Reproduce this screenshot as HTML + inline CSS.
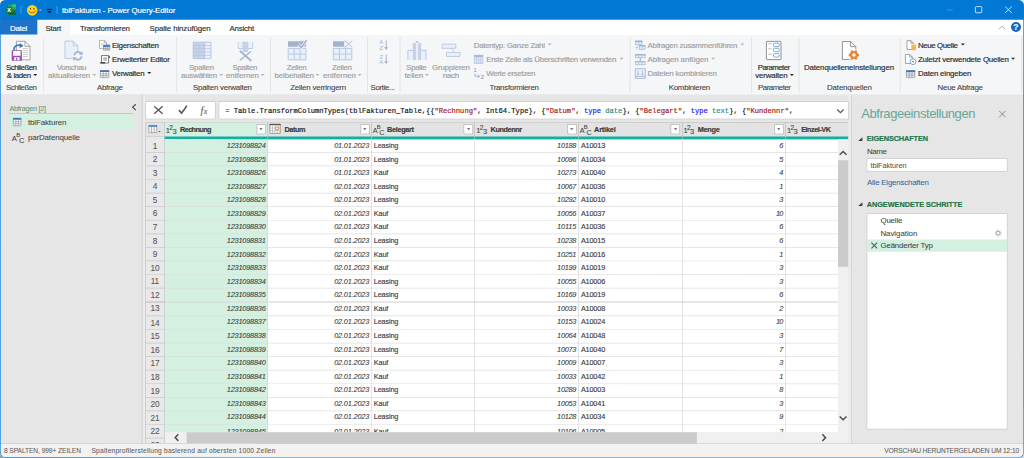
<!DOCTYPE html>
<html lang="de"><head><meta charset="utf-8"><title>tblFakturen - Power Query-Editor</title>
<style>
html,body{margin:0;padding:0;width:1024px;height:458px;overflow:hidden;background:#f4efe9;}
#w{position:absolute;left:0;top:0;width:1509px;height:675px;transform:scale(0.678595) rotate(0.004deg);transform-origin:0 0;font-family:"Liberation Sans",sans-serif;overflow:hidden;background:#e6e6e6;border-radius:8px;}
#w div,#w span.t,#w svg{position:absolute;display:block;box-sizing:border-box;}
#w span.t{white-space:nowrap;-webkit-text-stroke:0.25px;}
#w svg{overflow:visible;}
#cl,#cr{position:absolute;top:448px;width:10px;height:10px;background:#8d9b8c;}#cl{left:0;}#cr{left:1014px;background:#c3d6ea;}
</style></head><body><div id="cl"></div><div id="cr"></div><div id="w">
<div style="left:0.0px;top:27.26px;width:1509.0px;height:26.53px;background:#fff;"></div>
<div style="left:0.0px;top:27.26px;width:56.73px;height:26.53px;background:#1f72c9;"></div>
<div style="left:54.67px;top:27.26px;width:48.92px;height:26.53px;background:#f5f6f7;"></div>
<div style="left:0.0px;top:0.0px;width:1509.0px;height:29.33px;background:#0078d4;"></div>
<span class="t" style="font-size:11.64px;line-height:11.64px;color:#fff;letter-spacing:-0.114px;left:91.37px;top:8.84px;">tblFakturen - Power Query-Editor</span>
<svg style="left:0;top:0;pointer-events:none" width="1509" height="675" viewBox="0 0 1024 458"><rect x="8.20" y="4.40" width="7.80" height="10.30" fill="#21a366" stroke="none" stroke-width="0.7" rx="0.8" /><rect x="12.00" y="4.40" width="4.00" height="2.70" fill="#33c481" stroke="none" stroke-width="0.7" rx="0" /><rect x="8.20" y="9.60" width="7.80" height="2.60" fill="#107c41" stroke="none" stroke-width="0.7" rx="0" /><rect x="8.20" y="12.20" width="7.80" height="2.50" fill="#185c37" stroke="none" stroke-width="0.7" rx="0.6" /><rect x="5.90" y="6.60" width="6.40" height="6.30" fill="#107c41" stroke="none" stroke-width="0.7" rx="0.7" /><text x="9.10" y="11.90" font-size="5.6" fill="#fff" font-weight="bold" font-style="normal" font-family="&quot;Liberation Sans&quot;,sans-serif" text-anchor="middle" stroke="#fff" stroke-width="0.08" >X</text><line x1="21.00" y1="6.00" x2="21.00" y2="13.80" stroke="#5aa5e3" stroke-width="0.8" stroke-linecap="butt"/><circle cx="32.2" cy="10.3" r="5.3" fill="#ffd21f"/><ellipse cx="30.5" cy="8.8" rx="0.7" ry="1" fill="#6b5a1e"/><ellipse cx="34" cy="8.8" rx="0.7" ry="1" fill="#6b5a1e"/><path d="M28.9 11.3Q32.2 14.8 35.5 11.3" fill="none" stroke="#6b5a1e" stroke-width="0.8" stroke-linecap="round"/><path d="M38.9 9.4H41.7L40.3 11.2Z" fill="#c9b6b6" stroke="none" stroke-width="0.7" /><line x1="46.90" y1="9.40" x2="51.90" y2="9.40" stroke="#111" stroke-width="0.9" stroke-linecap="butt"/><path d="M47.1 11H51.7L49.4 13.2Z" fill="#111" stroke="none" stroke-width="0.7" /><line x1="57.00" y1="6.00" x2="57.00" y2="13.80" stroke="#5aa5e3" stroke-width="0.8" stroke-linecap="butt"/><line x1="946.20" y1="9.85" x2="952.70" y2="9.85" stroke="#4a9ee6" stroke-width="0.8" stroke-linecap="butt"/><rect x="975.40" y="6.50" width="6.40" height="6.20" fill="none" stroke="#fff" stroke-width="0.75" rx="0.9" /><line x1="1005.10" y1="6.40" x2="1011.80" y2="12.80" stroke="#fff" stroke-width="0.75" stroke-linecap="butt"/><line x1="1011.80" y1="6.40" x2="1005.10" y2="12.80" stroke="#fff" stroke-width="0.75" stroke-linecap="butt"/></svg>
<span class="t" style="font-size:11.64px;line-height:11.64px;color:#fff;letter-spacing:-0.439px;left:14.74px;top:34.77px;">Datei</span>
<span class="t" style="font-size:11.64px;line-height:11.64px;color:#333;letter-spacing:-0.381px;left:67.2px;top:34.77px;">Start</span>
<span class="t" style="font-size:11.64px;line-height:11.64px;color:#333;letter-spacing:-0.370px;left:117.89px;top:34.77px;">Transformieren</span>
<span class="t" style="font-size:11.64px;line-height:11.64px;color:#333;letter-spacing:-0.184px;left:220.31px;top:34.77px;">Spalte hinzufügen</span>
<span class="t" style="font-size:11.64px;line-height:11.64px;color:#333;letter-spacing:-0.284px;left:338.2px;top:34.77px;">Ansicht</span>
<svg style="left:0;top:0;pointer-events:none" width="1509" height="675" viewBox="0 0 1024 458"><path d="M999 29L1002 26L1005 29" fill="none" stroke="#9a9a9a" stroke-width="0.8" /><circle cx="1016" cy="26.9" r="5" fill="#1565b8"/><text x="1016.00" y="29.90" font-size="8.6" fill="#fff" font-weight="bold" font-style="normal" font-family="&quot;Liberation Sans&quot;,sans-serif" text-anchor="middle" stroke="#fff" stroke-width="0.08" >?</text></svg>
<div style="left:0.0px;top:51.14px;width:1509.0px;height:87.39px;background:#f5f6f7;"></div>
<div style="left:63.59px;top:55.26px;width:1.03px;height:80.31px;background:#dadbdc;"></div>
<div style="left:259.73px;top:55.26px;width:1.03px;height:80.31px;background:#dadbdc;"></div>
<div style="left:397.81px;top:55.26px;width:1.03px;height:80.31px;background:#dadbdc;"></div>
<div style="left:540.9px;top:55.26px;width:1.03px;height:80.31px;background:#dadbdc;"></div>
<div style="left:589.31px;top:55.26px;width:1.03px;height:80.31px;background:#dadbdc;"></div>
<div style="left:928.46px;top:55.26px;width:1.03px;height:80.31px;background:#dadbdc;"></div>
<div style="left:1106.92px;top:55.26px;width:1.03px;height:80.31px;background:#dadbdc;"></div>
<div style="left:1176.55px;top:55.26px;width:1.03px;height:80.31px;background:#dadbdc;"></div>
<div style="left:1326.2px;top:55.26px;width:1.03px;height:80.31px;background:#dadbdc;"></div>
<div style="left:1504.95px;top:55.26px;width:1.03px;height:80.31px;background:#dadbdc;"></div>
<span class="t" style="font-size:11.64px;line-height:11.64px;color:#2b2b2b;letter-spacing:-0.761px;left:31.30px;transform:translateX(-50%);top:92.54px;">Schließen</span>
<span class="t" style="font-size:11.64px;line-height:11.64px;color:#2b2b2b;letter-spacing:-0.563px;left:27.72px;transform:translateX(-50%);top:104.84px;">&amp; laden</span>
<svg style="left:48.7px;top:109.12px;" width="5.89" height="2.95" viewBox="0 0 2 1"><path d="M0 0H2L1 1Z" fill="#222"/></svg>
<span class="t" style="font-size:11.64px;line-height:11.64px;color:#a0a0a0;letter-spacing:-0.724px;left:105.30px;transform:translateX(-50%);top:92.54px;">Vorschau</span>
<span class="t" style="font-size:11.64px;line-height:11.64px;color:#a0a0a0;letter-spacing:-0.264px;left:101.85px;transform:translateX(-50%);top:104.84px;">aktualisieren</span>
<svg style="left:135.72px;top:109.12px;" width="5.89" height="2.95" viewBox="0 0 2 1"><path d="M0 0H2L1 1Z" fill="#b4b4b4"/></svg>
<span class="t" style="font-size:11.64px;line-height:11.64px;color:#a0a0a0;letter-spacing:-0.441px;left:296.86px;transform:translateX(-50%);top:92.54px;">Spalten</span>
<span class="t" style="font-size:11.64px;line-height:11.64px;color:#a0a0a0;letter-spacing:-0.326px;left:293.24px;transform:translateX(-50%);top:104.84px;">auswählen</span>
<svg style="left:322.58px;top:109.12px;" width="5.89" height="2.95" viewBox="0 0 2 1"><path d="M0 0H2L1 1Z" fill="#b4b4b4"/></svg>
<span class="t" style="font-size:11.64px;line-height:11.64px;color:#a0a0a0;letter-spacing:-0.441px;left:360.82px;transform:translateX(-50%);top:92.54px;">Spalten</span>
<span class="t" style="font-size:11.64px;line-height:11.64px;color:#a0a0a0;letter-spacing:-0.070px;left:357.32px;transform:translateX(-50%);top:104.84px;">entfernen</span>
<svg style="left:384.32px;top:109.12px;" width="5.89" height="2.95" viewBox="0 0 2 1"><path d="M0 0H2L1 1Z" fill="#b4b4b4"/></svg>
<span class="t" style="font-size:11.64px;line-height:11.64px;color:#a0a0a0;letter-spacing:-0.447px;left:437.08px;transform:translateX(-50%);top:92.54px;">Zeilen</span>
<span class="t" style="font-size:11.64px;line-height:11.64px;color:#a0a0a0;letter-spacing:-0.200px;left:433.52px;transform:translateX(-50%);top:104.84px;">beibehalten</span>
<svg style="left:465.37px;top:109.12px;" width="5.89" height="2.95" viewBox="0 0 2 1"><path d="M0 0H2L1 1Z" fill="#b4b4b4"/></svg>
<span class="t" style="font-size:11.64px;line-height:11.64px;color:#a0a0a0;letter-spacing:-0.447px;left:503.76px;transform:translateX(-50%);top:92.54px;">Zeilen</span>
<span class="t" style="font-size:11.64px;line-height:11.64px;color:#a0a0a0;letter-spacing:-0.070px;left:500.26px;transform:translateX(-50%);top:104.84px;">entfernen</span>
<svg style="left:527.27px;top:109.12px;" width="5.89" height="2.95" viewBox="0 0 2 1"><path d="M0 0H2L1 1Z" fill="#b4b4b4"/></svg>
<span class="t" style="font-size:11.64px;line-height:11.64px;color:#a0a0a0;letter-spacing:-0.619px;left:613.46px;transform:translateX(-50%);top:92.54px;">Spalte</span>
<span class="t" style="font-size:11.64px;line-height:11.64px;color:#a0a0a0;letter-spacing:-0.114px;left:610.02px;transform:translateX(-50%);top:104.84px;">teilen</span>
<svg style="left:626.37px;top:109.12px;" width="5.89" height="2.95" viewBox="0 0 2 1"><path d="M0 0H2L1 1Z" fill="#b4b4b4"/></svg>
<span class="t" style="font-size:11.64px;line-height:11.64px;color:#a0a0a0;letter-spacing:-0.249px;left:664.49px;transform:translateX(-50%);top:92.54px;">Gruppieren</span>
<span class="t" style="font-size:11.64px;line-height:11.64px;color:#a0a0a0;letter-spacing:-0.310px;left:664.46px;transform:translateX(-50%);top:104.84px;">nach</span>
<span class="t" style="font-size:11.64px;line-height:11.64px;color:#2b2b2b;letter-spacing:-0.807px;left:1140.19px;transform:translateX(-50%);top:92.54px;">Parameter</span>
<span class="t" style="font-size:11.64px;line-height:11.64px;color:#2b2b2b;letter-spacing:-0.241px;left:1136.79px;transform:translateX(-50%);top:104.84px;">verwalten</span>
<svg style="left:1163.51px;top:109.12px;" width="5.89" height="2.95" viewBox="0 0 2 1"><path d="M0 0H2L1 1Z" fill="#222"/></svg>
<span class="t" style="font-size:11.64px;line-height:11.64px;color:#2b2b2b;letter-spacing:-0.176px;left:1251.02px;transform:translateX(-50%);top:92.54px;">Datenquelleneinstellungen</span>
<span class="t" style="font-size:11.64px;line-height:11.64px;color:#2b2b2b;letter-spacing:-0.377px;left:165.05px;top:60.05px;">Eigenschaften</span>
<span class="t" style="font-size:11.64px;line-height:11.64px;color:#2b2b2b;letter-spacing:-0.262px;left:165.05px;top:81.04px;">Erweiterter Editor</span>
<span class="t" style="font-size:11.64px;line-height:11.64px;color:#2b2b2b;letter-spacing:-0.386px;left:165.05px;top:102.04px;">Verwalten</span>
<svg style="left:216.92px;top:106.32px;" width="5.89" height="2.95" viewBox="0 0 2 1"><path d="M0 0H2L1 1Z" fill="#222"/></svg>
<span class="t" style="font-size:11.64px;line-height:11.64px;color:#a0a0a0;letter-spacing:-0.434px;left:698.13px;top:60.05px;">Datentyp: Ganze Zahl</span>
<svg style="left:806.52px;top:64.32px;" width="5.89" height="2.95" viewBox="0 0 2 1"><path d="M0 0H2L1 1Z" fill="#b4b4b4"/></svg>
<span class="t" style="font-size:11.64px;line-height:11.64px;color:#a0a0a0;letter-spacing:-0.377px;left:716.55px;top:81.04px;">Erste Zeile als Überschriften verwenden</span>
<svg style="left:913.06px;top:85.32px;" width="5.89" height="2.95" viewBox="0 0 2 1"><path d="M0 0H2L1 1Z" fill="#b4b4b4"/></svg>
<span class="t" style="font-size:11.64px;line-height:11.64px;color:#a0a0a0;letter-spacing:-0.462px;left:716.55px;top:102.04px;">Werte ersetzen</span>
<span class="t" style="font-size:11.64px;line-height:11.64px;color:#a0a0a0;letter-spacing:-0.355px;left:954.18px;top:60.05px;">Abfragen zusammenführen</span>
<svg style="left:1091.23px;top:64.32px;" width="5.89" height="2.95" viewBox="0 0 2 1"><path d="M0 0H2L1 1Z" fill="#b4b4b4"/></svg>
<span class="t" style="font-size:11.64px;line-height:11.64px;color:#a0a0a0;letter-spacing:-0.178px;left:954.18px;top:81.04px;">Abfragen anfügen</span>
<svg style="left:1048.49px;top:85.32px;" width="5.89" height="2.95" viewBox="0 0 2 1"><path d="M0 0H2L1 1Z" fill="#b4b4b4"/></svg>
<span class="t" style="font-size:11.64px;line-height:11.64px;color:#a0a0a0;letter-spacing:-0.242px;left:954.18px;top:102.04px;">Dateien kombinieren</span>
<span class="t" style="font-size:11.64px;line-height:11.64px;color:#2b2b2b;letter-spacing:-0.577px;left:1352.79px;top:60.05px;">Neue Quelle</span>
<svg style="left:1416.16px;top:64.32px;" width="5.89" height="2.95" viewBox="0 0 2 1"><path d="M0 0H2L1 1Z" fill="#222"/></svg>
<span class="t" style="font-size:11.64px;line-height:11.64px;color:#2b2b2b;letter-spacing:-0.305px;left:1352.79px;top:81.04px;">Zuletzt verwendete Quellen</span>
<svg style="left:1490.28px;top:85.32px;" width="5.89" height="2.95" viewBox="0 0 2 1"><path d="M0 0H2L1 1Z" fill="#222"/></svg>
<span class="t" style="font-size:11.64px;line-height:11.64px;color:#2b2b2b;letter-spacing:-0.271px;left:1352.79px;top:102.04px;">Daten eingeben</span>
<span class="t" style="font-size:11.64px;line-height:11.64px;color:#444;letter-spacing:-0.761px;left:31.30px;transform:translateX(-50%);top:123.49px;-webkit-text-stroke:0.15px;">Schließen</span>
<span class="t" style="font-size:11.64px;line-height:11.64px;color:#444;letter-spacing:-0.410px;left:161.89px;transform:translateX(-50%);top:123.49px;-webkit-text-stroke:0.15px;">Abfrage</span>
<span class="t" style="font-size:11.64px;line-height:11.64px;color:#444;letter-spacing:-0.350px;left:327.71px;transform:translateX(-50%);top:123.49px;-webkit-text-stroke:0.15px;">Spalten verwalten</span>
<span class="t" style="font-size:11.64px;line-height:11.64px;color:#444;letter-spacing:-0.302px;left:468.76px;transform:translateX(-50%);top:123.49px;-webkit-text-stroke:0.15px;">Zeilen verringern</span>
<span class="t" style="font-size:11.64px;line-height:11.64px;color:#444;letter-spacing:-0.520px;left:563.85px;transform:translateX(-50%);top:123.49px;-webkit-text-stroke:0.15px;">Sortie...</span>
<span class="t" style="font-size:11.64px;line-height:11.64px;color:#444;letter-spacing:-0.416px;left:757.53px;transform:translateX(-50%);top:123.49px;-webkit-text-stroke:0.15px;">Transformieren</span>
<span class="t" style="font-size:11.64px;line-height:11.64px;color:#444;letter-spacing:-0.420px;left:1015.86px;transform:translateX(-50%);top:123.49px;-webkit-text-stroke:0.15px;">Kombinieren</span>
<span class="t" style="font-size:11.64px;line-height:11.64px;color:#444;letter-spacing:-0.715px;left:1140.97px;transform:translateX(-50%);top:123.49px;-webkit-text-stroke:0.15px;">Parameter</span>
<span class="t" style="font-size:11.64px;line-height:11.64px;color:#444;letter-spacing:-0.209px;left:1251.75px;transform:translateX(-50%);top:123.49px;-webkit-text-stroke:0.15px;">Datenquellen</span>
<span class="t" style="font-size:11.64px;line-height:11.64px;color:#444;letter-spacing:-0.390px;left:1414.93px;transform:translateX(-50%);top:123.49px;-webkit-text-stroke:0.15px;">Neue Abfrage</span>
<svg style="left:0;top:0;pointer-events:none" width="1509" height="675" viewBox="0 0 1024 458"><path d="M16.4 41.3H25L30 46.3V59.8H16.4Z" fill="#fff" stroke="#8c8c8c" stroke-width="0.8" stroke-linejoin="round"/><path d="M25 41.3V46.3H30" fill="none" stroke="#8c8c8c" stroke-width="0.8" stroke-linejoin="round"/><line x1="22.80" y1="48.50" x2="27.90" y2="48.50" stroke="#b0b0b0" stroke-width="0.7" stroke-linecap="butt"/><line x1="22.80" y1="50.50" x2="27.90" y2="50.50" stroke="#b0b0b0" stroke-width="0.7" stroke-linecap="butt"/><line x1="22.80" y1="52.50" x2="27.90" y2="52.50" stroke="#b0b0b0" stroke-width="0.7" stroke-linecap="butt"/><line x1="22.80" y1="54.50" x2="27.90" y2="54.50" stroke="#b0b0b0" stroke-width="0.7" stroke-linecap="butt"/><line x1="22.80" y1="56.50" x2="27.90" y2="56.50" stroke="#b0b0b0" stroke-width="0.7" stroke-linecap="butt"/><rect x="11.70" y="50.20" width="10.20" height="10.50" fill="#9a4fb4" stroke="none" stroke-width="0.7" rx="0.6" /><rect x="13.10" y="51.00" width="7.50" height="4.60" fill="#fff" stroke="none" stroke-width="0.7" rx="0" /><rect x="14.20" y="57.30" width="5.40" height="2.90" fill="#fff" stroke="none" stroke-width="0.7" rx="0" /><rect x="16.10" y="57.60" width="1.20" height="2.40" fill="#9a4fb4" stroke="none" stroke-width="0.7" rx="0" /><path d="M14 50.2C13.6 46 17 44.6 21 45.2" fill="none" stroke="#3b7bbd" stroke-width="1.6" /><path d="M19.6 42.6L23.6 45.6L19.6 48.2Z" fill="#3b7bbd" stroke="none" stroke-width="0.7" /><path d="M65 41H73.2L77.8 45.6V58.4H65Z" fill="#e8f0fc" stroke="#b9c7df" stroke-width="0.9" stroke-linejoin="round"/><path d="M73.2 41V45.6H77.8" fill="none" stroke="#b9c7df" stroke-width="0.9" stroke-linejoin="round"/><circle cx="77.9" cy="55.9" r="4.9" fill="#f5f6f7"/><path d="M74.3 55.4A3.7 3.7 0 0 1 81 53.6" fill="none" stroke="#a9b8d2" stroke-width="1.9" /><path d="M81.5 56.4A3.7 3.7 0 0 1 74.8 58.2" fill="none" stroke="#a9b8d2" stroke-width="1.9" /><path d="M78.8 54.6L82.8 54.9L82.5 50.9Z" fill="#a9b8d2" stroke="none" stroke-width="0.7" /><path d="M77 57.2L73 56.9L73.3 60.9Z" fill="#a9b8d2" stroke="none" stroke-width="0.7" /><path d="M99.5 40.4H104.39999999999999L106.8 42.8V48.5H99.5Z" fill="#fff" stroke="#9a9a9a" stroke-width="0.7" stroke-linejoin="round"/><path d="M104.39999999999999 40.4V42.8H106.8" fill="none" stroke="#9a9a9a" stroke-width="0.7" stroke-linejoin="round"/><line x1="101.00" y1="43.20" x2="103.40" y2="43.20" stroke="#aaa" stroke-width="0.6" stroke-linecap="butt"/><line x1="101.00" y1="44.80" x2="103.00" y2="44.80" stroke="#aaa" stroke-width="0.6" stroke-linecap="butt"/><rect x="103.50" y="45.10" width="6.30" height="5.10" fill="#dedede" stroke="#909090" stroke-width="0.6" rx="0" /><rect x="103.20" y="44.80" width="6.90" height="2.10" fill="#4a86c8" stroke="none" stroke-width="0.7" rx="0" /><line x1="105.60" y1="46.90" x2="105.60" y2="50.20" stroke="#909090" stroke-width="0.6" stroke-linecap="butt"/><line x1="107.70" y1="46.90" x2="107.70" y2="50.20" stroke="#909090" stroke-width="0.6" stroke-linecap="butt"/><line x1="103.50" y1="48.55" x2="109.80" y2="48.55" stroke="#909090" stroke-width="0.6" stroke-linecap="butt"/><path d="M101.5 55.5H108.6V63H101.5Z" fill="#fff" stroke="#5a5a5a" stroke-width="0.8" /><rect x="103.20" y="57.20" width="3.80" height="3.40" fill="#b9b9b9" stroke="none" stroke-width="0.7" rx="0" /><path d="M108.6 55.5Q110.2 55.6 110 57.6H108.6Z" fill="#4a4a4a" stroke="none" stroke-width="0.7" /><path d="M99.6 63.5Q99.8 61.8 101.5 61.9H105V63.5Z" fill="#4a4a4a" stroke="none" stroke-width="0.7" /><rect x="100.40" y="70.50" width="8.40" height="7.10" fill="#fff" stroke="#8a8a8a" stroke-width="0.65" rx="0" /><rect x="100.08" y="70.17" width="9.05" height="1.83" fill="#3b78c3" stroke="none" stroke-width="0.7" rx="0" /><line x1="103.20" y1="72.00" x2="103.20" y2="77.60" stroke="#8a8a8a" stroke-width="0.65" stroke-linecap="butt"/><line x1="106.00" y1="72.00" x2="106.00" y2="77.60" stroke="#8a8a8a" stroke-width="0.65" stroke-linecap="butt"/><line x1="100.40" y1="73.87" x2="108.80" y2="73.87" stroke="#8a8a8a" stroke-width="0.65" stroke-linecap="butt"/><line x1="100.40" y1="75.73" x2="108.80" y2="75.73" stroke="#8a8a8a" stroke-width="0.65" stroke-linecap="butt"/><rect x="193.20" y="42.10" width="17.80" height="16.50" fill="#c6d3e7" stroke="#b4c2dc" stroke-width="0.9" rx="0" /><rect x="204.80" y="42.60" width="5.70" height="15.50" fill="#e8f0fc" stroke="none" stroke-width="0.7" rx="0" /><line x1="193.20" y1="45.40" x2="211.00" y2="45.40" stroke="#b4c2dc" stroke-width="0.7" stroke-linecap="butt"/><line x1="193.20" y1="48.60" x2="211.00" y2="48.60" stroke="#b4c2dc" stroke-width="0.7" stroke-linecap="butt"/><line x1="193.20" y1="51.90" x2="211.00" y2="51.90" stroke="#b4c2dc" stroke-width="0.7" stroke-linecap="butt"/><line x1="193.20" y1="55.30" x2="211.00" y2="55.30" stroke="#b4c2dc" stroke-width="0.7" stroke-linecap="butt"/><line x1="199.00" y1="42.10" x2="199.00" y2="58.60" stroke="#bccbe2" stroke-width="0.6" stroke-linecap="butt"/><line x1="204.70" y1="42.10" x2="204.70" y2="58.60" stroke="#b4c2dc" stroke-width="0.8" stroke-linecap="butt"/><path d="M238.2 42V48.4H242.8" fill="#e8f0fc" stroke="#b4c2dc" stroke-width="0.9" /><rect x="238.60" y="42.00" width="4.20" height="6.00" fill="#e8f0fc" stroke="none" stroke-width="0.7" rx="0" /><path d="M252.7 42V48.4H247.9" fill="#e8f0fc" stroke="#b4c2dc" stroke-width="0.9" /><rect x="247.90" y="42.00" width="4.40" height="6.00" fill="#e8f0fc" stroke="none" stroke-width="0.7" rx="0" /><rect x="242.80" y="42.00" width="5.10" height="9.60" fill="#c6d3e7" stroke="#b9c7df" stroke-width="0.5" rx="0" /><line x1="240.30" y1="51.30" x2="250.80" y2="60.40" stroke="#a6b4d0" stroke-width="1.9" stroke-linecap="round"/><line x1="240.30" y1="60.00" x2="250.60" y2="51.60" stroke="#a6b4d0" stroke-width="1.3" stroke-linecap="round"/><rect x="288.00" y="41.20" width="18.10" height="5.60" fill="#a3b2cf" stroke="none" stroke-width="0.7" rx="0" /><rect x="288.20" y="48.30" width="17.80" height="11.50" fill="#e8f0fc" stroke="#b4c2dc" stroke-width="0.9" rx="0.5" /><line x1="294.13" y1="48.30" x2="294.13" y2="59.80" stroke="#b4c2dc" stroke-width="0.9" stroke-linecap="butt"/><line x1="300.07" y1="48.30" x2="300.07" y2="59.80" stroke="#b4c2dc" stroke-width="0.9" stroke-linecap="butt"/><line x1="288.20" y1="54.00" x2="306.00" y2="54.00" stroke="#c3d0e5" stroke-width="1.2" stroke-linecap="butt"/><path d="M298.4 44.3L301.4 47.4L306.6 40.3" fill="none" stroke="#f5f6f7" stroke-width="3.0" /><path d="M298.4 44.3L301.4 47.4L306.6 40.3" fill="none" stroke="#a3b2cf" stroke-width="1.6" /><rect x="333.10" y="41.20" width="11.50" height="5.60" fill="#a3b2cf" stroke="none" stroke-width="0.7" rx="0" /><rect x="333.30" y="48.30" width="18.50" height="11.50" fill="#e8f0fc" stroke="#b4c2dc" stroke-width="0.9" rx="0.5" /><line x1="339.47" y1="48.30" x2="339.47" y2="59.80" stroke="#b4c2dc" stroke-width="0.9" stroke-linecap="butt"/><line x1="345.63" y1="48.30" x2="345.63" y2="59.80" stroke="#b4c2dc" stroke-width="0.9" stroke-linecap="butt"/><line x1="333.30" y1="54.00" x2="351.80" y2="54.00" stroke="#c3d0e5" stroke-width="1.2" stroke-linecap="butt"/><path d="M344.4 41.2L346.8 44L344.4 46.8Z" fill="#f5f6f7" stroke="none" stroke-width="0.7" /><line x1="344.60" y1="40.40" x2="352.20" y2="47.20" stroke="#a9b7d2" stroke-width="0.9" stroke-linecap="butt"/><line x1="352.20" y1="40.80" x2="344.60" y2="47.60" stroke="#a9b7d2" stroke-width="0.9" stroke-linecap="butt"/><text fill="#a3b2cf" font-weight="normal" font-style="normal" font-family="&quot;Liberation Sans&quot;,sans-serif" text-anchor="middle" stroke="#a3b2cf" stroke-width="0"><tspan x="381.20" y="44.40" font-size="5.9">A</tspan><tspan x="381.20" y="49.80" font-size="5.9">Z</tspan></text><line x1="386.20" y1="40.40" x2="386.20" y2="48.60" stroke="#a3b2cf" stroke-width="1.0" stroke-linecap="butt"/><path d="M384.1 47.2H388.3L386.2 49.9Z" fill="#a3b2cf" stroke="none" stroke-width="0.7" /><text fill="#a3b2cf" font-weight="normal" font-style="normal" font-family="&quot;Liberation Sans&quot;,sans-serif" text-anchor="middle" stroke="#a3b2cf" stroke-width="0"><tspan x="381.20" y="58.60" font-size="5.9">Z</tspan><tspan x="381.20" y="63.90" font-size="5.9">A</tspan></text><line x1="386.20" y1="54.40" x2="386.20" y2="62.60" stroke="#a3b2cf" stroke-width="1.0" stroke-linecap="butt"/><path d="M384.1 61.2H388.3L386.2 63.9Z" fill="#a3b2cf" stroke="none" stroke-width="0.7" /><path d="M415.2 41.3H418.4L416.8 43Z" fill="#9fb0cf" stroke="none" stroke-width="0.7" /><rect x="413.00" y="43.20" width="2.90" height="16.50" fill="#c6d3e7" stroke="#b9c7df" stroke-width="0.4" rx="0" /><rect x="418.10" y="43.20" width="2.90" height="16.50" fill="#c6d3e7" stroke="#b9c7df" stroke-width="0.4" rx="0" /><rect x="408.20" y="50.50" width="4.80" height="9.20" fill="#e8f0fc" stroke="none" stroke-width="0.7" rx="0" /><path d="M407.9 59.7V50.3H413" fill="none" stroke="#b4c2dc" stroke-width="0.9" /><rect x="421.00" y="50.50" width="4.70" height="9.20" fill="#e8f0fc" stroke="none" stroke-width="0.7" rx="0" /><path d="M426 59.7V50.3H421" fill="none" stroke="#b4c2dc" stroke-width="0.9" /><rect x="442.20" y="44.10" width="13.60" height="4.20" fill="#e8f0fc" stroke="#b4c2dc" stroke-width="0.8" rx="0" /><rect x="446.50" y="52.40" width="13.50" height="4.00" fill="#e8f0fc" stroke="#b4c2dc" stroke-width="0.8" rx="0" /><line x1="451.20" y1="48.40" x2="455.00" y2="52.40" stroke="#b4c2dc" stroke-width="0.8" stroke-linecap="butt"/><rect x="474.40" y="55.20" width="8.50" height="8.20" fill="#dfe8f8" stroke="#b4c2dc" stroke-width="0.7" rx="0" /><rect x="474.10" y="54.90" width="9.10" height="2.10" fill="#a9b8d4" stroke="none" stroke-width="0.7" rx="0" /><line x1="476.52" y1="57.00" x2="476.52" y2="63.40" stroke="#b4c2dc" stroke-width="0.7" stroke-linecap="butt"/><line x1="478.65" y1="57.00" x2="478.65" y2="63.40" stroke="#b4c2dc" stroke-width="0.7" stroke-linecap="butt"/><line x1="480.77" y1="57.00" x2="480.77" y2="63.40" stroke="#b4c2dc" stroke-width="0.7" stroke-linecap="butt"/><line x1="474.40" y1="60.20" x2="482.90" y2="60.20" stroke="#c9d5ea" stroke-width="0.6" stroke-linecap="butt"/><text x="473.60" y="72.30" font-size="5.6" fill="#8099c8" font-weight="normal" font-style="normal" font-family="&quot;Liberation Sans&quot;,sans-serif" text-anchor="start" stroke="#8099c8" stroke-width="0.08" >1</text><text x="480.60" y="78.60" font-size="6.2" fill="#8099c8" font-weight="normal" font-style="normal" font-family="&quot;Liberation Sans&quot;,sans-serif" text-anchor="start" stroke="#8099c8" stroke-width="0.08" >2</text><path d="M475 73.6V76.2H479.2" fill="none" stroke="#8099c8" stroke-width="0.7" /><path d="M477.8 74.7L479.6 76.2L477.8 77.7" fill="none" stroke="#8099c8" stroke-width="0.7" /><rect x="635.60" y="41.00" width="6.40" height="3.70" fill="#e8f0fc" stroke="#9fb0cf" stroke-width="0.7" rx="0" /><rect x="635.30" y="40.70" width="7.00" height="1.40" fill="#9fb0cf" stroke="none" stroke-width="0.7" rx="0" /><line x1="638.80" y1="42.00" x2="638.80" y2="44.70" stroke="#9fb0cf" stroke-width="0.6" stroke-linecap="butt"/><rect x="639.20" y="45.40" width="5.90" height="3.90" fill="#e8f0fc" stroke="#9fb0cf" stroke-width="0.7" rx="0" /><rect x="638.90" y="45.10" width="6.50" height="1.30" fill="#9fb0cf" stroke="none" stroke-width="0.7" rx="0" /><line x1="642.20" y1="46.40" x2="642.20" y2="49.30" stroke="#9fb0cf" stroke-width="0.6" stroke-linecap="butt"/><path d="M635.4 47.6H637.6M636.6 46.4L637.9 47.6L636.6 48.8" fill="none" stroke="#9fb0cf" stroke-width="0.7" /><rect x="635.50" y="54.40" width="9.70" height="3.20" fill="#e8f0fc" stroke="#9fb0cf" stroke-width="0.7" rx="0" /><rect x="635.20" y="54.10" width="10.30" height="1.30" fill="#9fb0cf" stroke="none" stroke-width="0.7" rx="0" /><rect x="635.50" y="61.60" width="9.70" height="3.00" fill="#e8f0fc" stroke="#9fb0cf" stroke-width="0.7" rx="0" /><line x1="635.50" y1="61.70" x2="645.20" y2="61.70" stroke="#9fb0cf" stroke-width="0.9" stroke-linecap="butt"/><line x1="638.70" y1="55.40" x2="638.70" y2="57.60" stroke="#9fb0cf" stroke-width="0.6" stroke-linecap="butt"/><line x1="638.70" y1="61.60" x2="638.70" y2="64.60" stroke="#9fb0cf" stroke-width="0.6" stroke-linecap="butt"/><line x1="642.00" y1="55.40" x2="642.00" y2="57.60" stroke="#9fb0cf" stroke-width="0.6" stroke-linecap="butt"/><line x1="642.00" y1="61.60" x2="642.00" y2="64.60" stroke="#9fb0cf" stroke-width="0.6" stroke-linecap="butt"/><line x1="640.30" y1="57.60" x2="640.30" y2="61.40" stroke="#9fb0cf" stroke-width="1.1" stroke-linecap="butt"/><rect x="635.30" y="68.70" width="10.00" height="9.60" fill="#e8f0fc" stroke="#9fb0cf" stroke-width="0.8" rx="0" /><line x1="635.30" y1="76.20" x2="645.30" y2="76.20" stroke="#9fb0cf" stroke-width="0.8" stroke-linecap="butt"/><line x1="638.10" y1="70.60" x2="638.10" y2="74.60" stroke="#9fb0cf" stroke-width="0.7" stroke-linecap="butt"/><path d="M636.9 73.6H639.3000000000001L638.1 75.2Z" fill="#9fb0cf" stroke="none" stroke-width="0.7" /><line x1="642.50" y1="70.60" x2="642.50" y2="74.60" stroke="#9fb0cf" stroke-width="0.7" stroke-linecap="butt"/><path d="M641.3 73.6H643.7L642.5 75.2Z" fill="#9fb0cf" stroke="none" stroke-width="0.7" /><rect x="766.40" y="41.30" width="14.60" height="18.20" fill="#fff" stroke="#8c8c8c" stroke-width="0.95" rx="0.6" /><line x1="781.30" y1="42.00" x2="781.30" y2="59.60" stroke="#c8c8c8" stroke-width="0.6" stroke-linecap="butt"/><line x1="768.20" y1="43.60" x2="772.00" y2="43.60" stroke="#a5a5a5" stroke-width="0.7" stroke-linecap="butt"/><rect x="773.50" y="43.10" width="5.70" height="3.40" fill="#fff" stroke="#6a9ad3" stroke-width="0.85" rx="0.9" /><line x1="768.20" y1="48.70" x2="772.00" y2="48.70" stroke="#a5a5a5" stroke-width="0.7" stroke-linecap="butt"/><rect x="773.50" y="48.20" width="5.70" height="3.40" fill="#fff" stroke="#6a9ad3" stroke-width="0.85" rx="0.9" /><line x1="768.20" y1="54.10" x2="772.00" y2="54.10" stroke="#a5a5a5" stroke-width="0.7" stroke-linecap="butt"/><rect x="773.50" y="53.60" width="5.70" height="3.40" fill="#fff" stroke="#6a9ad3" stroke-width="0.85" rx="0.9" /><path d="M842.4 41.4H850.5999999999999L855.8 46.6V59.5H842.4Z" fill="#fff" stroke="#8a8a8a" stroke-width="0.9" stroke-linejoin="round"/><path d="M850.5999999999999 41.4V46.6H855.8" fill="none" stroke="#8a8a8a" stroke-width="0.9" stroke-linejoin="round"/><circle cx="853.9" cy="54.9" r="6" fill="#fff"/><line x1="856.30" y1="54.90" x2="859.10" y2="54.90" stroke="#e8873a" stroke-width="2.3" stroke-linecap="butt"/><line x1="855.10" y1="56.98" x2="856.50" y2="59.40" stroke="#e8873a" stroke-width="2.3" stroke-linecap="butt"/><line x1="852.70" y1="56.98" x2="851.30" y2="59.40" stroke="#e8873a" stroke-width="2.3" stroke-linecap="butt"/><line x1="851.50" y1="54.90" x2="848.70" y2="54.90" stroke="#e8873a" stroke-width="2.3" stroke-linecap="butt"/><line x1="852.70" y1="52.82" x2="851.30" y2="50.40" stroke="#e8873a" stroke-width="2.3" stroke-linecap="butt"/><line x1="855.10" y1="52.82" x2="856.50" y2="50.40" stroke="#e8873a" stroke-width="2.3" stroke-linecap="butt"/><circle cx="853.9" cy="54.9" r="2.9" fill="none" stroke="#e8873a" stroke-width="2.3"/><path d="M907 40.5H910.9L913.5 43.1V49.4H907Z" fill="#fff" stroke="#8a8a8a" stroke-width="0.75" stroke-linejoin="round"/><path d="M910.9 40.5V43.1H913.5" fill="none" stroke="#8a8a8a" stroke-width="0.75" stroke-linejoin="round"/><rect x="911.40" y="44.20" width="4.50" height="6.00" fill="#ecb45f" stroke="none" stroke-width="0.7" rx="0.7" /><ellipse cx="913.65" cy="44.5" rx="2.25" ry="0.8" fill="#f6d59a"/><path d="M905.4 54.4H909.8L912.4 57.0V63.4H905.4Z" fill="#fff" stroke="#8a8a8a" stroke-width="0.75" stroke-linejoin="round"/><path d="M909.8 54.4V57.0H912.4" fill="none" stroke="#8a8a8a" stroke-width="0.75" stroke-linejoin="round"/><circle cx="913" cy="61.6" r="2.9" fill="#fff" stroke="#5b8fcf" stroke-width="0.8"/><path d="M911.7 60.9H914.3L913 62.4Z" fill="#5b8fcf" stroke="none" stroke-width="0.7" /><rect x="906.40" y="70.60" width="8.40" height="7.00" fill="#fff" stroke="#8a8a8a" stroke-width="0.65" rx="0" /><rect x="906.07" y="70.27" width="9.05" height="1.83" fill="#3b78c3" stroke="none" stroke-width="0.7" rx="0" /><line x1="909.20" y1="72.10" x2="909.20" y2="77.60" stroke="#8a8a8a" stroke-width="0.65" stroke-linecap="butt"/><line x1="912.00" y1="72.10" x2="912.00" y2="77.60" stroke="#8a8a8a" stroke-width="0.65" stroke-linecap="butt"/><line x1="906.40" y1="73.93" x2="914.80" y2="73.93" stroke="#8a8a8a" stroke-width="0.65" stroke-linecap="butt"/><line x1="906.40" y1="75.77" x2="914.80" y2="75.77" stroke="#8a8a8a" stroke-width="0.65" stroke-linecap="butt"/></svg>
<div style="left:207.78px;top:138.82px;width:3.24px;height:514.74px;background:#dbdbdb;"></div>
<div style="left:211.02px;top:138.82px;width:2.8px;height:514.74px;background:#ececec;"></div>
<div style="left:1250.23px;top:138.82px;width:3.39px;height:514.74px;background:#ececec;"></div>
<div style="left:1253.62px;top:138.82px;width:1.47px;height:514.74px;background:#cdcdcd;"></div>
<span class="t" style="font-size:10.76px;line-height:10.76px;color:#5f9679;letter-spacing:-0.438px;left:14.0px;top:154.78px;-webkit-text-stroke:0.1px;">Abfragen [2]</span>
<div style="left:13.26px;top:166.82px;width:182.36px;height:1.18px;background:#bdbdbd;"></div>
<div style="left:13.26px;top:167.99px;width:182.36px;height:22.1px;background:#d3f0e0;"></div>
<span class="t" style="font-size:11.64px;line-height:11.64px;color:#444;letter-spacing:-0.150px;left:41.26px;top:173.51px;-webkit-text-stroke:0.1px;">tblFakturen</span>
<span class="t" style="font-size:11.64px;line-height:11.64px;color:#444;letter-spacing:-0.180px;left:41.26px;top:195.99px;-webkit-text-stroke:0.1px;">parDatenquelle</span>
<svg style="left:0;top:0;pointer-events:none" width="1509" height="675" viewBox="0 0 1024 458"><rect x="13.30" y="118.20" width="7.70" height="7.60" fill="#fff" stroke="#8a8a8a" stroke-width="0.6" rx="0" /><rect x="13.00" y="117.90" width="8.30" height="1.80" fill="#3b78c3" stroke="none" stroke-width="0.7" rx="0" /><line x1="15.87" y1="119.70" x2="15.87" y2="125.80" stroke="#8a8a8a" stroke-width="0.6" stroke-linecap="butt"/><line x1="18.43" y1="119.70" x2="18.43" y2="125.80" stroke="#8a8a8a" stroke-width="0.6" stroke-linecap="butt"/><line x1="13.30" y1="121.73" x2="21.00" y2="121.73" stroke="#8a8a8a" stroke-width="0.6" stroke-linecap="butt"/><line x1="13.30" y1="123.77" x2="21.00" y2="123.77" stroke="#8a8a8a" stroke-width="0.6" stroke-linecap="butt"/><text fill="#444" font-weight="normal" font-style="normal" font-family="&quot;Liberation Sans&quot;,sans-serif" text-anchor="start" stroke="#444" stroke-width="0.08"><tspan x="11.80" y="141.00" font-size="7.6">A</tspan><tspan x="16.20" y="136.60" font-size="6">B</tspan><tspan x="19.00" y="143.00" font-size="7.6">C</tspan></text><path d="M135.8 104.2L132.6 107.1L135.8 110" fill="none" stroke="#444" stroke-width="1.1" /></svg>
<div style="left:213.53px;top:148.69px;width:104.78px;height:27.56px;background:#fff;border:1.5px solid #bdbdbd;"></div>
<div style="left:322.43px;top:148.69px;width:928.54px;height:27.56px;background:#fff;border:1.5px solid #bdbdbd;"></div>
<svg style="left:0;top:0;pointer-events:none" width="1509" height="675" viewBox="0 0 1024 458"><line x1="154.20" y1="106.30" x2="162.60" y2="113.80" stroke="#595959" stroke-width="1.4" stroke-linecap="butt"/><line x1="162.60" y1="106.30" x2="154.20" y2="113.80" stroke="#595959" stroke-width="1.4" stroke-linecap="butt"/><path d="M178.9 110.1L181.6 113.1L186.9 105.8" fill="none" stroke="#595959" stroke-width="1.6" /><text fill="#595959" font-weight="normal" font-style="italic" font-family="&quot;Liberation Serif&quot;,serif" text-anchor="start" stroke="#595959" stroke-width="0.08"><tspan x="200.60" y="113.60" font-size="10.2">f</tspan><tspan x="203.70" y="113.90" font-size="8.2">x</tspan></text><path d="M837.2 109.4L840.4 112.6L843.6 109.4" fill="none" stroke="#555" stroke-width="1.2" /></svg>
<span class="t" style="left:332.01px;top:157.54px;font-family:'Liberation Mono',monospace;white-space:pre;font-size:10.49px;line-height:10.49px;"><span style="color:#111">= Table.TransformColumnTypes(tblFakturen_Table,{{</span><span style="color:#a31515">&quot;Rechnung&quot;</span><span style="color:#111">, Int64.Type}, {</span><span style="color:#a31515">&quot;Datum&quot;</span><span style="color:#111">, </span><span style="color:#1414ff">type</span><span style="color:#111"> </span><span style="color:#2b8a8a">date</span><span style="color:#111">}, {</span><span style="color:#a31515">&quot;Belegart&quot;</span><span style="color:#111">, </span><span style="color:#1414ff">type</span><span style="color:#111"> </span><span style="color:#2b8a8a">text</span><span style="color:#111">}, {</span><span style="color:#a31515">&quot;Kundennr&quot;</span><span style="color:#111">,</span></span>
<div style="left:213.82px;top:179.78px;width:1036.41px;height:21.52px;background:#e3e3e3;border-top:1px solid #c2c2c2;"></div>
<div style="left:242.27px;top:180.67px;width:152.57px;height:20.63px;background:#d3f0e0;"></div>
<div style="left:242.27px;top:204.69px;width:992.42px;height:431.92px;background:#fff;"></div>
<div style="left:242.27px;top:204.69px;width:152.57px;height:431.92px;background:#d3f0e0;"></div>
<div style="left:213.82px;top:204.69px;width:28.44px;height:448.87px;background:#e9e9e9;"></div>
<div style="left:242.27px;top:201.0px;width:1007.96px;height:3.54px;background:#12b0a0;"></div>
<div style="left:213.82px;top:200.86px;width:28.44px;height:1.03px;background:#c2c2c2;"></div>
<div style="left:242.27px;top:224.2px;width:992.42px;height:1.03px;background:#dedede;"></div>
<div style="left:213.82px;top:224.2px;width:28.44px;height:1.03px;background:#c8c8c8;"></div>
<div style="left:242.27px;top:244.23px;width:992.42px;height:1.03px;background:#dedede;"></div>
<div style="left:213.82px;top:244.23px;width:28.44px;height:1.03px;background:#c8c8c8;"></div>
<div style="left:242.27px;top:264.25px;width:992.42px;height:1.03px;background:#dedede;"></div>
<div style="left:213.82px;top:264.25px;width:28.44px;height:1.03px;background:#c8c8c8;"></div>
<div style="left:242.27px;top:284.28px;width:992.42px;height:1.03px;background:#dedede;"></div>
<div style="left:213.82px;top:284.28px;width:28.44px;height:1.03px;background:#c8c8c8;"></div>
<div style="left:242.27px;top:304.31px;width:992.42px;height:1.03px;background:#dedede;"></div>
<div style="left:213.82px;top:304.31px;width:28.44px;height:1.03px;background:#c8c8c8;"></div>
<div style="left:242.27px;top:324.33px;width:992.42px;height:1.03px;background:#dedede;"></div>
<div style="left:213.82px;top:324.33px;width:28.44px;height:1.03px;background:#c8c8c8;"></div>
<div style="left:242.27px;top:344.36px;width:992.42px;height:1.03px;background:#dedede;"></div>
<div style="left:213.82px;top:344.36px;width:28.44px;height:1.03px;background:#c8c8c8;"></div>
<div style="left:242.27px;top:364.39px;width:992.42px;height:1.03px;background:#dedede;"></div>
<div style="left:213.82px;top:364.39px;width:28.44px;height:1.03px;background:#c8c8c8;"></div>
<div style="left:242.27px;top:384.41px;width:992.42px;height:1.03px;background:#dedede;"></div>
<div style="left:213.82px;top:384.41px;width:28.44px;height:1.03px;background:#c8c8c8;"></div>
<div style="left:242.27px;top:404.44px;width:992.42px;height:1.03px;background:#dedede;"></div>
<div style="left:213.82px;top:404.44px;width:28.44px;height:1.03px;background:#c8c8c8;"></div>
<div style="left:242.27px;top:424.47px;width:992.42px;height:1.03px;background:#dedede;"></div>
<div style="left:213.82px;top:424.47px;width:28.44px;height:1.03px;background:#c8c8c8;"></div>
<div style="left:242.27px;top:444.49px;width:992.42px;height:1.03px;background:#dedede;"></div>
<div style="left:213.82px;top:444.49px;width:28.44px;height:1.03px;background:#c8c8c8;"></div>
<div style="left:242.27px;top:464.52px;width:992.42px;height:1.03px;background:#dedede;"></div>
<div style="left:213.82px;top:464.52px;width:28.44px;height:1.03px;background:#c8c8c8;"></div>
<div style="left:242.27px;top:484.55px;width:992.42px;height:1.03px;background:#dedede;"></div>
<div style="left:213.82px;top:484.55px;width:28.44px;height:1.03px;background:#c8c8c8;"></div>
<div style="left:242.27px;top:504.57px;width:992.42px;height:1.03px;background:#dedede;"></div>
<div style="left:213.82px;top:504.57px;width:28.44px;height:1.03px;background:#c8c8c8;"></div>
<div style="left:242.27px;top:524.6px;width:992.42px;height:1.03px;background:#dedede;"></div>
<div style="left:213.82px;top:524.6px;width:28.44px;height:1.03px;background:#c8c8c8;"></div>
<div style="left:242.27px;top:544.63px;width:992.42px;height:1.03px;background:#dedede;"></div>
<div style="left:213.82px;top:544.63px;width:28.44px;height:1.03px;background:#c8c8c8;"></div>
<div style="left:242.27px;top:564.65px;width:992.42px;height:1.03px;background:#dedede;"></div>
<div style="left:213.82px;top:564.65px;width:28.44px;height:1.03px;background:#c8c8c8;"></div>
<div style="left:242.27px;top:584.68px;width:992.42px;height:1.03px;background:#dedede;"></div>
<div style="left:213.82px;top:584.68px;width:28.44px;height:1.03px;background:#c8c8c8;"></div>
<div style="left:242.27px;top:604.71px;width:992.42px;height:1.03px;background:#dedede;"></div>
<div style="left:213.82px;top:604.71px;width:28.44px;height:1.03px;background:#c8c8c8;"></div>
<div style="left:242.27px;top:624.73px;width:992.42px;height:1.03px;background:#dedede;"></div>
<div style="left:213.82px;top:624.73px;width:28.44px;height:1.03px;background:#c8c8c8;"></div>
<div style="left:213.82px;top:644.76px;width:28.44px;height:1.03px;background:#c8c8c8;"></div>
<div style="left:213.53px;top:179.78px;width:1.03px;height:473.77px;background:#c2c2c2;"></div>
<div style="left:241.75px;top:179.78px;width:1.03px;height:473.77px;background:#c2c2c2;"></div>
<div style="left:394.31px;top:179.78px;width:1.03px;height:24.9px;background:#bdbdbd;"></div>
<div style="left:394.31px;top:204.69px;width:1.03px;height:431.92px;background:#d6d6d6;"></div>
<div style="left:546.88px;top:179.78px;width:1.03px;height:24.9px;background:#bdbdbd;"></div>
<div style="left:546.88px;top:204.69px;width:1.03px;height:431.92px;background:#d6d6d6;"></div>
<div style="left:699.45px;top:179.78px;width:1.03px;height:24.9px;background:#bdbdbd;"></div>
<div style="left:699.45px;top:204.69px;width:1.03px;height:431.92px;background:#d6d6d6;"></div>
<div style="left:852.01px;top:179.78px;width:1.03px;height:24.9px;background:#bdbdbd;"></div>
<div style="left:852.01px;top:204.69px;width:1.03px;height:431.92px;background:#d6d6d6;"></div>
<div style="left:1004.58px;top:179.78px;width:1.03px;height:24.9px;background:#bdbdbd;"></div>
<div style="left:1004.58px;top:204.69px;width:1.03px;height:431.92px;background:#d6d6d6;"></div>
<div style="left:1157.14px;top:179.78px;width:1.03px;height:24.9px;background:#bdbdbd;"></div>
<div style="left:1157.14px;top:204.69px;width:1.03px;height:431.92px;background:#d6d6d6;"></div>
<span class="t" style="font-size:10.76px;line-height:10.76px;color:#3a3a3a;font-weight:bold;letter-spacing:-0.861px;left:265.25px;top:185.14px;">Rechnung</span>
<svg style="left:0;top:0;pointer-events:none" width="1509" height="675" viewBox="0 0 1024 458"><text fill="#444" font-weight="normal" font-style="normal" font-family="&quot;Liberation Sans&quot;,sans-serif" text-anchor="start" stroke="#444" stroke-width="0.08"><tspan x="165.80" y="132.50" font-size="7.6">1</tspan><tspan x="169.30" y="130.10" font-size="6.6">2</tspan><tspan x="172.40" y="133.50" font-size="7.6">3</tspan></text></svg>
<div style="left:378.03px;top:183.17px;width:14.0px;height:14.59px;background:#fff;border:1.4px solid #a8a8a8;"></div>
<svg style="left:382.38px;top:189.07px;" width="5.31" height="2.65" viewBox="0 0 2 1"><path d="M0 0H2L1 1Z" fill="#555"/></svg>
<span class="t" style="font-size:10.76px;line-height:10.76px;color:#3a3a3a;font-weight:bold;letter-spacing:-0.631px;left:419.29px;top:185.14px;">Datum</span>
<svg style="left:0;top:0;pointer-events:none" width="1509" height="675" viewBox="0 0 1024 458"><rect x="269.93" y="124.20" width="10.30" height="9.10" fill="#fff" stroke="#777" stroke-width="0.7" rx="0" /><rect x="269.58" y="123.90" width="11.00" height="1.40" fill="#555" stroke="none" stroke-width="0.7" rx="0" /><line x1="272.50" y1="125.30" x2="272.50" y2="133.30" stroke="#999" stroke-width="0.5" stroke-linecap="butt"/><line x1="275.08" y1="125.30" x2="275.08" y2="133.30" stroke="#999" stroke-width="0.5" stroke-linecap="butt"/><line x1="277.66" y1="125.30" x2="277.66" y2="133.30" stroke="#999" stroke-width="0.5" stroke-linecap="butt"/><line x1="269.93" y1="127.97" x2="280.23" y2="127.97" stroke="#999" stroke-width="0.5" stroke-linecap="butt"/><line x1="269.93" y1="130.63" x2="280.23" y2="130.63" stroke="#999" stroke-width="0.5" stroke-linecap="butt"/><rect x="275.63" y="126.90" width="2.80" height="2.80" fill="#fff" stroke="#ea8a35" stroke-width="0.9" rx="0" /></svg>
<div style="left:530.6px;top:183.17px;width:14.0px;height:14.59px;background:#fff;border:1.4px solid #a8a8a8;"></div>
<svg style="left:534.94px;top:189.07px;" width="5.31" height="2.65" viewBox="0 0 2 1"><path d="M0 0H2L1 1Z" fill="#555"/></svg>
<span class="t" style="font-size:10.76px;line-height:10.76px;color:#3a3a3a;font-weight:bold;letter-spacing:-0.465px;left:570.38px;top:185.14px;">Belegart</span>
<svg style="left:0;top:0;pointer-events:none" width="1509" height="675" viewBox="0 0 1024 458"><text fill="#444" font-weight="normal" font-style="normal" font-family="&quot;Liberation Sans&quot;,sans-serif" text-anchor="start" stroke="#444" stroke-width="0.08"><tspan x="372.66" y="132.80" font-size="7.2">A</tspan><tspan x="376.66" y="128.90" font-size="5.8">B</tspan><tspan x="379.36" y="134.60" font-size="7.2">C</tspan></text></svg>
<div style="left:683.16px;top:183.17px;width:14.0px;height:14.59px;background:#fff;border:1.4px solid #a8a8a8;"></div>
<svg style="left:687.51px;top:189.07px;" width="5.31" height="2.65" viewBox="0 0 2 1"><path d="M0 0H2L1 1Z" fill="#555"/></svg>
<span class="t" style="font-size:10.76px;line-height:10.76px;color:#3a3a3a;font-weight:bold;letter-spacing:-0.593px;left:722.95px;top:185.14px;">Kundennr</span>
<svg style="left:0;top:0;pointer-events:none" width="1509" height="675" viewBox="0 0 1024 458"><text fill="#444" font-weight="normal" font-style="normal" font-family="&quot;Liberation Sans&quot;,sans-serif" text-anchor="start" stroke="#444" stroke-width="0.08"><tspan x="476.39" y="132.50" font-size="7.6">1</tspan><tspan x="479.89" y="130.10" font-size="6.6">2</tspan><tspan x="482.99" y="133.50" font-size="7.6">3</tspan></text></svg>
<div style="left:835.73px;top:183.17px;width:14.0px;height:14.59px;background:#fff;border:1.4px solid #a8a8a8;"></div>
<svg style="left:840.07px;top:189.07px;" width="5.31" height="2.65" viewBox="0 0 2 1"><path d="M0 0H2L1 1Z" fill="#555"/></svg>
<span class="t" style="font-size:10.76px;line-height:10.76px;color:#3a3a3a;font-weight:bold;letter-spacing:-0.275px;left:875.51px;top:185.14px;">Artikel</span>
<svg style="left:0;top:0;pointer-events:none" width="1509" height="675" viewBox="0 0 1024 458"><text fill="#444" font-weight="normal" font-style="normal" font-family="&quot;Liberation Sans&quot;,sans-serif" text-anchor="start" stroke="#444" stroke-width="0.08"><tspan x="579.72" y="132.80" font-size="7.2">A</tspan><tspan x="583.72" y="128.90" font-size="5.8">B</tspan><tspan x="586.42" y="134.60" font-size="7.2">C</tspan></text></svg>
<div style="left:988.29px;top:183.17px;width:14.0px;height:14.59px;background:#fff;border:1.4px solid #a8a8a8;"></div>
<svg style="left:992.64px;top:189.07px;" width="5.31" height="2.65" viewBox="0 0 2 1"><path d="M0 0H2L1 1Z" fill="#555"/></svg>
<span class="t" style="font-size:10.76px;line-height:10.76px;color:#3a3a3a;font-weight:bold;letter-spacing:-0.320px;left:1028.08px;top:185.14px;">Menge</span>
<svg style="left:0;top:0;pointer-events:none" width="1509" height="675" viewBox="0 0 1024 458"><text fill="#444" font-weight="normal" font-style="normal" font-family="&quot;Liberation Sans&quot;,sans-serif" text-anchor="start" stroke="#444" stroke-width="0.08"><tspan x="683.45" y="132.50" font-size="7.6">1</tspan><tspan x="686.95" y="130.10" font-size="6.6">2</tspan><tspan x="690.05" y="133.50" font-size="7.6">3</tspan></text></svg>
<div style="left:1140.86px;top:183.17px;width:14.0px;height:14.59px;background:#fff;border:1.4px solid #a8a8a8;"></div>
<svg style="left:1145.2px;top:189.07px;" width="5.31" height="2.65" viewBox="0 0 2 1"><path d="M0 0H2L1 1Z" fill="#555"/></svg>
<span class="t" style="font-size:10.76px;line-height:10.76px;color:#3a3a3a;font-weight:bold;letter-spacing:-0.721px;left:1180.65px;top:185.14px;">Einzel-VK</span>
<svg style="left:0;top:0;pointer-events:none" width="1509" height="675" viewBox="0 0 1024 458"><text fill="#444" font-weight="normal" font-style="normal" font-family="&quot;Liberation Sans&quot;,sans-serif" text-anchor="start" stroke="#444" stroke-width="0.08"><tspan x="786.98" y="132.50" font-size="7.6">1</tspan><tspan x="790.48" y="130.10" font-size="6.6">2</tspan><tspan x="793.58" y="133.50" font-size="7.6">3</tspan></text></svg>
<svg style="left:0;top:0;pointer-events:none" width="1509" height="675" viewBox="0 0 1024 458"><rect x="148.90" y="125.60" width="7.90" height="7.00" fill="#f4f4f4" stroke="#8a8a8a" stroke-width="0.6" rx="0" /><rect x="148.60" y="125.30" width="8.50" height="1.50" fill="#3b78c3" stroke="none" stroke-width="0.7" rx="0" /><line x1="151.53" y1="126.80" x2="151.53" y2="132.60" stroke="#8a8a8a" stroke-width="0.6" stroke-linecap="butt"/><line x1="154.17" y1="126.80" x2="154.17" y2="132.60" stroke="#8a8a8a" stroke-width="0.6" stroke-linecap="butt"/><path d="M158.29999999999998 131.0H160.7L159.5 132.3Z" fill="#555" stroke="none" stroke-width="0.7" /></svg>
<div style="left:0;top:0;width:1509px;height:636.61px;overflow:hidden;">
<span class="t" style="font-size:10.76px;line-height:10.76px;color:#3c3c3c;font-style:italic;letter-spacing:-0.278px;right:1117.69px;top:208.94px;-webkit-text-stroke:0.15px;">1231098824</span>
<span class="t" style="font-size:10.76px;line-height:10.76px;color:#3c3c3c;font-style:italic;letter-spacing:-0.235px;right:965.09px;top:208.94px;-webkit-text-stroke:0.15px;">01.01.2023</span>
<span class="t" style="font-size:10.76px;line-height:10.76px;color:#3c3c3c;letter-spacing:-0.250px;left:550.93px;top:208.94px;-webkit-text-stroke:0.2px;">Leasing</span>
<span class="t" style="font-size:10.76px;line-height:10.76px;color:#3c3c3c;font-style:italic;letter-spacing:-0.405px;right:660.13px;top:208.94px;-webkit-text-stroke:0.15px;">10188</span>
<span class="t" style="font-size:10.76px;line-height:10.76px;color:#3c3c3c;letter-spacing:-0.250px;left:856.06px;top:208.94px;-webkit-text-stroke:0.2px;">A10013</span>
<span class="t" style="font-size:10.76px;line-height:10.76px;color:#3c3c3c;font-style:italic;right:354.59px;top:208.94px;-webkit-text-stroke:0.15px;">6</span>
<span class="t" style="font-size:10.76px;line-height:10.76px;color:#3c3c3c;font-style:italic;letter-spacing:-0.278px;right:1117.69px;top:228.97px;-webkit-text-stroke:0.15px;">1231098825</span>
<span class="t" style="font-size:10.76px;line-height:10.76px;color:#3c3c3c;font-style:italic;letter-spacing:-0.235px;right:965.09px;top:228.97px;-webkit-text-stroke:0.15px;">01.01.2023</span>
<span class="t" style="font-size:10.76px;line-height:10.76px;color:#3c3c3c;letter-spacing:-0.250px;left:550.93px;top:228.97px;-webkit-text-stroke:0.2px;">Leasing</span>
<span class="t" style="font-size:10.76px;line-height:10.76px;color:#3c3c3c;font-style:italic;letter-spacing:-0.405px;right:660.13px;top:228.97px;-webkit-text-stroke:0.15px;">10096</span>
<span class="t" style="font-size:10.76px;line-height:10.76px;color:#3c3c3c;letter-spacing:-0.250px;left:856.06px;top:228.97px;-webkit-text-stroke:0.2px;">A10034</span>
<span class="t" style="font-size:10.76px;line-height:10.76px;color:#3c3c3c;font-style:italic;right:354.59px;top:228.97px;-webkit-text-stroke:0.15px;">5</span>
<span class="t" style="font-size:10.76px;line-height:10.76px;color:#3c3c3c;font-style:italic;letter-spacing:-0.278px;right:1117.69px;top:248.99px;-webkit-text-stroke:0.15px;">1231098826</span>
<span class="t" style="font-size:10.76px;line-height:10.76px;color:#3c3c3c;font-style:italic;letter-spacing:-0.235px;right:965.09px;top:248.99px;-webkit-text-stroke:0.15px;">01.01.2023</span>
<span class="t" style="font-size:10.76px;line-height:10.76px;color:#3c3c3c;letter-spacing:-0.250px;left:550.93px;top:248.99px;-webkit-text-stroke:0.2px;">Kauf</span>
<span class="t" style="font-size:10.76px;line-height:10.76px;color:#3c3c3c;font-style:italic;letter-spacing:-0.405px;right:660.13px;top:248.99px;-webkit-text-stroke:0.15px;">10273</span>
<span class="t" style="font-size:10.76px;line-height:10.76px;color:#3c3c3c;letter-spacing:-0.250px;left:856.06px;top:248.99px;-webkit-text-stroke:0.2px;">A10040</span>
<span class="t" style="font-size:10.76px;line-height:10.76px;color:#3c3c3c;font-style:italic;right:354.59px;top:248.99px;-webkit-text-stroke:0.15px;">4</span>
<span class="t" style="font-size:10.76px;line-height:10.76px;color:#3c3c3c;font-style:italic;letter-spacing:-0.278px;right:1117.69px;top:269.02px;-webkit-text-stroke:0.15px;">1231098827</span>
<span class="t" style="font-size:10.76px;line-height:10.76px;color:#3c3c3c;font-style:italic;letter-spacing:-0.235px;right:965.09px;top:269.02px;-webkit-text-stroke:0.15px;">02.01.2023</span>
<span class="t" style="font-size:10.76px;line-height:10.76px;color:#3c3c3c;letter-spacing:-0.250px;left:550.93px;top:269.02px;-webkit-text-stroke:0.2px;">Leasing</span>
<span class="t" style="font-size:10.76px;line-height:10.76px;color:#3c3c3c;font-style:italic;letter-spacing:-0.405px;right:660.13px;top:269.02px;-webkit-text-stroke:0.15px;">10067</span>
<span class="t" style="font-size:10.76px;line-height:10.76px;color:#3c3c3c;letter-spacing:-0.250px;left:856.06px;top:269.02px;-webkit-text-stroke:0.2px;">A10036</span>
<span class="t" style="font-size:10.76px;line-height:10.76px;color:#3c3c3c;font-style:italic;right:354.59px;top:269.02px;-webkit-text-stroke:0.15px;">1</span>
<span class="t" style="font-size:10.76px;line-height:10.76px;color:#3c3c3c;font-style:italic;letter-spacing:-0.278px;right:1117.69px;top:289.05px;-webkit-text-stroke:0.15px;">1231098828</span>
<span class="t" style="font-size:10.76px;line-height:10.76px;color:#3c3c3c;font-style:italic;letter-spacing:-0.235px;right:965.09px;top:289.05px;-webkit-text-stroke:0.15px;">02.01.2023</span>
<span class="t" style="font-size:10.76px;line-height:10.76px;color:#3c3c3c;letter-spacing:-0.250px;left:550.93px;top:289.05px;-webkit-text-stroke:0.2px;">Leasing</span>
<span class="t" style="font-size:10.76px;line-height:10.76px;color:#3c3c3c;font-style:italic;letter-spacing:-0.405px;right:660.13px;top:289.05px;-webkit-text-stroke:0.15px;">10292</span>
<span class="t" style="font-size:10.76px;line-height:10.76px;color:#3c3c3c;letter-spacing:-0.250px;left:856.06px;top:289.05px;-webkit-text-stroke:0.2px;">A10010</span>
<span class="t" style="font-size:10.76px;line-height:10.76px;color:#3c3c3c;font-style:italic;right:354.59px;top:289.05px;-webkit-text-stroke:0.15px;">3</span>
<span class="t" style="font-size:10.76px;line-height:10.76px;color:#3c3c3c;font-style:italic;letter-spacing:-0.278px;right:1117.69px;top:309.07px;-webkit-text-stroke:0.15px;">1231098829</span>
<span class="t" style="font-size:10.76px;line-height:10.76px;color:#3c3c3c;font-style:italic;letter-spacing:-0.235px;right:965.09px;top:309.07px;-webkit-text-stroke:0.15px;">02.01.2023</span>
<span class="t" style="font-size:10.76px;line-height:10.76px;color:#3c3c3c;letter-spacing:-0.250px;left:550.93px;top:309.07px;-webkit-text-stroke:0.2px;">Kauf</span>
<span class="t" style="font-size:10.76px;line-height:10.76px;color:#3c3c3c;font-style:italic;letter-spacing:-0.405px;right:660.13px;top:309.07px;-webkit-text-stroke:0.15px;">10056</span>
<span class="t" style="font-size:10.76px;line-height:10.76px;color:#3c3c3c;letter-spacing:-0.250px;left:856.06px;top:309.07px;-webkit-text-stroke:0.2px;">A10037</span>
<span class="t" style="font-size:10.76px;line-height:10.76px;color:#3c3c3c;font-style:italic;letter-spacing:-1.090px;right:355.68px;top:309.07px;-webkit-text-stroke:0.15px;">10</span>
<span class="t" style="font-size:10.76px;line-height:10.76px;color:#3c3c3c;font-style:italic;letter-spacing:-0.278px;right:1117.69px;top:329.10px;-webkit-text-stroke:0.15px;">1231098830</span>
<span class="t" style="font-size:10.76px;line-height:10.76px;color:#3c3c3c;font-style:italic;letter-spacing:-0.235px;right:965.09px;top:329.10px;-webkit-text-stroke:0.15px;">02.01.2023</span>
<span class="t" style="font-size:10.76px;line-height:10.76px;color:#3c3c3c;letter-spacing:-0.250px;left:550.93px;top:329.10px;-webkit-text-stroke:0.2px;">Kauf</span>
<span class="t" style="font-size:10.76px;line-height:10.76px;color:#3c3c3c;font-style:italic;letter-spacing:-0.206px;right:659.93px;top:329.10px;-webkit-text-stroke:0.15px;">10115</span>
<span class="t" style="font-size:10.76px;line-height:10.76px;color:#3c3c3c;letter-spacing:-0.250px;left:856.06px;top:329.10px;-webkit-text-stroke:0.2px;">A10036</span>
<span class="t" style="font-size:10.76px;line-height:10.76px;color:#3c3c3c;font-style:italic;right:354.59px;top:329.10px;-webkit-text-stroke:0.15px;">6</span>
<span class="t" style="font-size:10.76px;line-height:10.76px;color:#3c3c3c;font-style:italic;letter-spacing:-0.278px;right:1117.69px;top:349.13px;-webkit-text-stroke:0.15px;">1231098831</span>
<span class="t" style="font-size:10.76px;line-height:10.76px;color:#3c3c3c;font-style:italic;letter-spacing:-0.235px;right:965.09px;top:349.13px;-webkit-text-stroke:0.15px;">02.01.2023</span>
<span class="t" style="font-size:10.76px;line-height:10.76px;color:#3c3c3c;letter-spacing:-0.250px;left:550.93px;top:349.13px;-webkit-text-stroke:0.2px;">Leasing</span>
<span class="t" style="font-size:10.76px;line-height:10.76px;color:#3c3c3c;font-style:italic;letter-spacing:-0.405px;right:660.13px;top:349.13px;-webkit-text-stroke:0.15px;">10238</span>
<span class="t" style="font-size:10.76px;line-height:10.76px;color:#3c3c3c;letter-spacing:-0.250px;left:856.06px;top:349.13px;-webkit-text-stroke:0.2px;">A10015</span>
<span class="t" style="font-size:10.76px;line-height:10.76px;color:#3c3c3c;font-style:italic;right:354.59px;top:349.13px;-webkit-text-stroke:0.15px;">6</span>
<span class="t" style="font-size:10.76px;line-height:10.76px;color:#3c3c3c;font-style:italic;letter-spacing:-0.278px;right:1117.69px;top:369.15px;-webkit-text-stroke:0.15px;">1231098832</span>
<span class="t" style="font-size:10.76px;line-height:10.76px;color:#3c3c3c;font-style:italic;letter-spacing:-0.235px;right:965.09px;top:369.15px;-webkit-text-stroke:0.15px;">02.01.2023</span>
<span class="t" style="font-size:10.76px;line-height:10.76px;color:#3c3c3c;letter-spacing:-0.250px;left:550.93px;top:369.15px;-webkit-text-stroke:0.2px;">Kauf</span>
<span class="t" style="font-size:10.76px;line-height:10.76px;color:#3c3c3c;font-style:italic;letter-spacing:-0.405px;right:660.13px;top:369.15px;-webkit-text-stroke:0.15px;">10251</span>
<span class="t" style="font-size:10.76px;line-height:10.76px;color:#3c3c3c;letter-spacing:-0.250px;left:856.06px;top:369.15px;-webkit-text-stroke:0.2px;">A10016</span>
<span class="t" style="font-size:10.76px;line-height:10.76px;color:#3c3c3c;font-style:italic;right:354.59px;top:369.15px;-webkit-text-stroke:0.15px;">1</span>
<span class="t" style="font-size:10.76px;line-height:10.76px;color:#3c3c3c;font-style:italic;letter-spacing:-0.278px;right:1117.69px;top:389.18px;-webkit-text-stroke:0.15px;">1231098833</span>
<span class="t" style="font-size:10.76px;line-height:10.76px;color:#3c3c3c;font-style:italic;letter-spacing:-0.235px;right:965.09px;top:389.18px;-webkit-text-stroke:0.15px;">02.01.2023</span>
<span class="t" style="font-size:10.76px;line-height:10.76px;color:#3c3c3c;letter-spacing:-0.250px;left:550.93px;top:389.18px;-webkit-text-stroke:0.2px;">Kauf</span>
<span class="t" style="font-size:10.76px;line-height:10.76px;color:#3c3c3c;font-style:italic;letter-spacing:-0.405px;right:660.13px;top:389.18px;-webkit-text-stroke:0.15px;">10199</span>
<span class="t" style="font-size:10.76px;line-height:10.76px;color:#3c3c3c;letter-spacing:-0.250px;left:856.06px;top:389.18px;-webkit-text-stroke:0.2px;">A10019</span>
<span class="t" style="font-size:10.76px;line-height:10.76px;color:#3c3c3c;font-style:italic;right:354.59px;top:389.18px;-webkit-text-stroke:0.15px;">3</span>
<span class="t" style="font-size:10.76px;line-height:10.76px;color:#3c3c3c;font-style:italic;letter-spacing:-0.278px;right:1117.69px;top:409.21px;-webkit-text-stroke:0.15px;">1231098834</span>
<span class="t" style="font-size:10.76px;line-height:10.76px;color:#3c3c3c;font-style:italic;letter-spacing:-0.235px;right:965.09px;top:409.21px;-webkit-text-stroke:0.15px;">02.01.2023</span>
<span class="t" style="font-size:10.76px;line-height:10.76px;color:#3c3c3c;letter-spacing:-0.250px;left:550.93px;top:409.21px;-webkit-text-stroke:0.2px;">Leasing</span>
<span class="t" style="font-size:10.76px;line-height:10.76px;color:#3c3c3c;font-style:italic;letter-spacing:-0.405px;right:660.13px;top:409.21px;-webkit-text-stroke:0.15px;">10055</span>
<span class="t" style="font-size:10.76px;line-height:10.76px;color:#3c3c3c;letter-spacing:-0.250px;left:856.06px;top:409.21px;-webkit-text-stroke:0.2px;">A10006</span>
<span class="t" style="font-size:10.76px;line-height:10.76px;color:#3c3c3c;font-style:italic;right:354.59px;top:409.21px;-webkit-text-stroke:0.15px;">3</span>
<span class="t" style="font-size:10.76px;line-height:10.76px;color:#3c3c3c;font-style:italic;letter-spacing:-0.278px;right:1117.69px;top:429.23px;-webkit-text-stroke:0.15px;">1231098835</span>
<span class="t" style="font-size:10.76px;line-height:10.76px;color:#3c3c3c;font-style:italic;letter-spacing:-0.235px;right:965.09px;top:429.23px;-webkit-text-stroke:0.15px;">02.01.2023</span>
<span class="t" style="font-size:10.76px;line-height:10.76px;color:#3c3c3c;letter-spacing:-0.250px;left:550.93px;top:429.23px;-webkit-text-stroke:0.2px;">Leasing</span>
<span class="t" style="font-size:10.76px;line-height:10.76px;color:#3c3c3c;font-style:italic;letter-spacing:-0.405px;right:660.13px;top:429.23px;-webkit-text-stroke:0.15px;">10169</span>
<span class="t" style="font-size:10.76px;line-height:10.76px;color:#3c3c3c;letter-spacing:-0.250px;left:856.06px;top:429.23px;-webkit-text-stroke:0.2px;">A10019</span>
<span class="t" style="font-size:10.76px;line-height:10.76px;color:#3c3c3c;font-style:italic;right:354.59px;top:429.23px;-webkit-text-stroke:0.15px;">6</span>
<span class="t" style="font-size:10.76px;line-height:10.76px;color:#3c3c3c;font-style:italic;letter-spacing:-0.278px;right:1117.69px;top:449.26px;-webkit-text-stroke:0.15px;">1231098836</span>
<span class="t" style="font-size:10.76px;line-height:10.76px;color:#3c3c3c;font-style:italic;letter-spacing:-0.235px;right:965.09px;top:449.26px;-webkit-text-stroke:0.15px;">02.01.2023</span>
<span class="t" style="font-size:10.76px;line-height:10.76px;color:#3c3c3c;letter-spacing:-0.250px;left:550.93px;top:449.26px;-webkit-text-stroke:0.2px;">Kauf</span>
<span class="t" style="font-size:10.76px;line-height:10.76px;color:#3c3c3c;font-style:italic;letter-spacing:-0.405px;right:660.13px;top:449.26px;-webkit-text-stroke:0.15px;">10033</span>
<span class="t" style="font-size:10.76px;line-height:10.76px;color:#3c3c3c;letter-spacing:-0.250px;left:856.06px;top:449.26px;-webkit-text-stroke:0.2px;">A10008</span>
<span class="t" style="font-size:10.76px;line-height:10.76px;color:#3c3c3c;font-style:italic;right:354.59px;top:449.26px;-webkit-text-stroke:0.15px;">2</span>
<span class="t" style="font-size:10.76px;line-height:10.76px;color:#3c3c3c;font-style:italic;letter-spacing:-0.278px;right:1117.69px;top:469.29px;-webkit-text-stroke:0.15px;">1231098837</span>
<span class="t" style="font-size:10.76px;line-height:10.76px;color:#3c3c3c;font-style:italic;letter-spacing:-0.235px;right:965.09px;top:469.29px;-webkit-text-stroke:0.15px;">02.01.2023</span>
<span class="t" style="font-size:10.76px;line-height:10.76px;color:#3c3c3c;letter-spacing:-0.250px;left:550.93px;top:469.29px;-webkit-text-stroke:0.2px;">Leasing</span>
<span class="t" style="font-size:10.76px;line-height:10.76px;color:#3c3c3c;font-style:italic;letter-spacing:-0.405px;right:660.13px;top:469.29px;-webkit-text-stroke:0.15px;">10153</span>
<span class="t" style="font-size:10.76px;line-height:10.76px;color:#3c3c3c;letter-spacing:-0.250px;left:856.06px;top:469.29px;-webkit-text-stroke:0.2px;">A10024</span>
<span class="t" style="font-size:10.76px;line-height:10.76px;color:#3c3c3c;font-style:italic;letter-spacing:-1.090px;right:355.68px;top:469.29px;-webkit-text-stroke:0.15px;">10</span>
<span class="t" style="font-size:10.76px;line-height:10.76px;color:#3c3c3c;font-style:italic;letter-spacing:-0.278px;right:1117.69px;top:489.31px;-webkit-text-stroke:0.15px;">1231098838</span>
<span class="t" style="font-size:10.76px;line-height:10.76px;color:#3c3c3c;font-style:italic;letter-spacing:-0.235px;right:965.09px;top:489.31px;-webkit-text-stroke:0.15px;">02.01.2023</span>
<span class="t" style="font-size:10.76px;line-height:10.76px;color:#3c3c3c;letter-spacing:-0.250px;left:550.93px;top:489.31px;-webkit-text-stroke:0.2px;">Leasing</span>
<span class="t" style="font-size:10.76px;line-height:10.76px;color:#3c3c3c;font-style:italic;letter-spacing:-0.405px;right:660.13px;top:489.31px;-webkit-text-stroke:0.15px;">10064</span>
<span class="t" style="font-size:10.76px;line-height:10.76px;color:#3c3c3c;letter-spacing:-0.250px;left:856.06px;top:489.31px;-webkit-text-stroke:0.2px;">A10048</span>
<span class="t" style="font-size:10.76px;line-height:10.76px;color:#3c3c3c;font-style:italic;right:354.59px;top:489.31px;-webkit-text-stroke:0.15px;">3</span>
<span class="t" style="font-size:10.76px;line-height:10.76px;color:#3c3c3c;font-style:italic;letter-spacing:-0.278px;right:1117.69px;top:509.34px;-webkit-text-stroke:0.15px;">1231098839</span>
<span class="t" style="font-size:10.76px;line-height:10.76px;color:#3c3c3c;font-style:italic;letter-spacing:-0.235px;right:965.09px;top:509.34px;-webkit-text-stroke:0.15px;">02.01.2023</span>
<span class="t" style="font-size:10.76px;line-height:10.76px;color:#3c3c3c;letter-spacing:-0.250px;left:550.93px;top:509.34px;-webkit-text-stroke:0.2px;">Leasing</span>
<span class="t" style="font-size:10.76px;line-height:10.76px;color:#3c3c3c;font-style:italic;letter-spacing:-0.405px;right:660.13px;top:509.34px;-webkit-text-stroke:0.15px;">10073</span>
<span class="t" style="font-size:10.76px;line-height:10.76px;color:#3c3c3c;letter-spacing:-0.250px;left:856.06px;top:509.34px;-webkit-text-stroke:0.2px;">A10040</span>
<span class="t" style="font-size:10.76px;line-height:10.76px;color:#3c3c3c;font-style:italic;right:354.59px;top:509.34px;-webkit-text-stroke:0.15px;">7</span>
<span class="t" style="font-size:10.76px;line-height:10.76px;color:#3c3c3c;font-style:italic;letter-spacing:-0.278px;right:1117.69px;top:529.37px;-webkit-text-stroke:0.15px;">1231098840</span>
<span class="t" style="font-size:10.76px;line-height:10.76px;color:#3c3c3c;font-style:italic;letter-spacing:-0.235px;right:965.09px;top:529.37px;-webkit-text-stroke:0.15px;">02.01.2023</span>
<span class="t" style="font-size:10.76px;line-height:10.76px;color:#3c3c3c;letter-spacing:-0.250px;left:550.93px;top:529.37px;-webkit-text-stroke:0.2px;">Kauf</span>
<span class="t" style="font-size:10.76px;line-height:10.76px;color:#3c3c3c;font-style:italic;letter-spacing:-0.405px;right:660.13px;top:529.37px;-webkit-text-stroke:0.15px;">10009</span>
<span class="t" style="font-size:10.76px;line-height:10.76px;color:#3c3c3c;letter-spacing:-0.250px;left:856.06px;top:529.37px;-webkit-text-stroke:0.2px;">A10007</span>
<span class="t" style="font-size:10.76px;line-height:10.76px;color:#3c3c3c;font-style:italic;right:354.59px;top:529.37px;-webkit-text-stroke:0.15px;">3</span>
<span class="t" style="font-size:10.76px;line-height:10.76px;color:#3c3c3c;font-style:italic;letter-spacing:-0.278px;right:1117.69px;top:549.39px;-webkit-text-stroke:0.15px;">1231098841</span>
<span class="t" style="font-size:10.76px;line-height:10.76px;color:#3c3c3c;font-style:italic;letter-spacing:-0.235px;right:965.09px;top:549.39px;-webkit-text-stroke:0.15px;">02.01.2023</span>
<span class="t" style="font-size:10.76px;line-height:10.76px;color:#3c3c3c;letter-spacing:-0.250px;left:550.93px;top:549.39px;-webkit-text-stroke:0.2px;">Kauf</span>
<span class="t" style="font-size:10.76px;line-height:10.76px;color:#3c3c3c;font-style:italic;letter-spacing:-0.405px;right:660.13px;top:549.39px;-webkit-text-stroke:0.15px;">10033</span>
<span class="t" style="font-size:10.76px;line-height:10.76px;color:#3c3c3c;letter-spacing:-0.250px;left:856.06px;top:549.39px;-webkit-text-stroke:0.2px;">A10042</span>
<span class="t" style="font-size:10.76px;line-height:10.76px;color:#3c3c3c;font-style:italic;right:354.59px;top:549.39px;-webkit-text-stroke:0.15px;">1</span>
<span class="t" style="font-size:10.76px;line-height:10.76px;color:#3c3c3c;font-style:italic;letter-spacing:-0.278px;right:1117.69px;top:569.42px;-webkit-text-stroke:0.15px;">1231098842</span>
<span class="t" style="font-size:10.76px;line-height:10.76px;color:#3c3c3c;font-style:italic;letter-spacing:-0.235px;right:965.09px;top:569.42px;-webkit-text-stroke:0.15px;">02.01.2023</span>
<span class="t" style="font-size:10.76px;line-height:10.76px;color:#3c3c3c;letter-spacing:-0.250px;left:550.93px;top:569.42px;-webkit-text-stroke:0.2px;">Leasing</span>
<span class="t" style="font-size:10.76px;line-height:10.76px;color:#3c3c3c;font-style:italic;letter-spacing:-0.405px;right:660.13px;top:569.42px;-webkit-text-stroke:0.15px;">10289</span>
<span class="t" style="font-size:10.76px;line-height:10.76px;color:#3c3c3c;letter-spacing:-0.250px;left:856.06px;top:569.42px;-webkit-text-stroke:0.2px;">A10003</span>
<span class="t" style="font-size:10.76px;line-height:10.76px;color:#3c3c3c;font-style:italic;right:354.59px;top:569.42px;-webkit-text-stroke:0.15px;">8</span>
<span class="t" style="font-size:10.76px;line-height:10.76px;color:#3c3c3c;font-style:italic;letter-spacing:-0.278px;right:1117.69px;top:589.45px;-webkit-text-stroke:0.15px;">1231098843</span>
<span class="t" style="font-size:10.76px;line-height:10.76px;color:#3c3c3c;font-style:italic;letter-spacing:-0.235px;right:965.09px;top:589.45px;-webkit-text-stroke:0.15px;">02.01.2023</span>
<span class="t" style="font-size:10.76px;line-height:10.76px;color:#3c3c3c;letter-spacing:-0.250px;left:550.93px;top:589.45px;-webkit-text-stroke:0.2px;">Kauf</span>
<span class="t" style="font-size:10.76px;line-height:10.76px;color:#3c3c3c;font-style:italic;letter-spacing:-0.405px;right:660.13px;top:589.45px;-webkit-text-stroke:0.15px;">10053</span>
<span class="t" style="font-size:10.76px;line-height:10.76px;color:#3c3c3c;letter-spacing:-0.250px;left:856.06px;top:589.45px;-webkit-text-stroke:0.2px;">A10041</span>
<span class="t" style="font-size:10.76px;line-height:10.76px;color:#3c3c3c;font-style:italic;right:354.59px;top:589.45px;-webkit-text-stroke:0.15px;">3</span>
<span class="t" style="font-size:10.76px;line-height:10.76px;color:#3c3c3c;font-style:italic;letter-spacing:-0.278px;right:1117.69px;top:609.47px;-webkit-text-stroke:0.15px;">1231098844</span>
<span class="t" style="font-size:10.76px;line-height:10.76px;color:#3c3c3c;font-style:italic;letter-spacing:-0.235px;right:965.09px;top:609.47px;-webkit-text-stroke:0.15px;">02.01.2023</span>
<span class="t" style="font-size:10.76px;line-height:10.76px;color:#3c3c3c;letter-spacing:-0.250px;left:550.93px;top:609.47px;-webkit-text-stroke:0.2px;">Leasing</span>
<span class="t" style="font-size:10.76px;line-height:10.76px;color:#3c3c3c;font-style:italic;letter-spacing:-0.405px;right:660.13px;top:609.47px;-webkit-text-stroke:0.15px;">10128</span>
<span class="t" style="font-size:10.76px;line-height:10.76px;color:#3c3c3c;letter-spacing:-0.250px;left:856.06px;top:609.47px;-webkit-text-stroke:0.2px;">A10034</span>
<span class="t" style="font-size:10.76px;line-height:10.76px;color:#3c3c3c;font-style:italic;right:354.59px;top:609.47px;-webkit-text-stroke:0.15px;">9</span>
<span class="t" style="font-size:10.76px;line-height:10.76px;color:#3c3c3c;font-style:italic;letter-spacing:-0.278px;right:1117.69px;top:629.50px;-webkit-text-stroke:0.15px;">1231098845</span>
<span class="t" style="font-size:10.76px;line-height:10.76px;color:#3c3c3c;font-style:italic;letter-spacing:-0.235px;right:965.09px;top:629.50px;-webkit-text-stroke:0.15px;">02.01.2023</span>
<span class="t" style="font-size:10.76px;line-height:10.76px;color:#3c3c3c;letter-spacing:-0.250px;left:550.93px;top:629.50px;-webkit-text-stroke:0.2px;">Kauf</span>
<span class="t" style="font-size:10.76px;line-height:10.76px;color:#3c3c3c;font-style:italic;letter-spacing:-0.405px;right:660.13px;top:629.50px;-webkit-text-stroke:0.15px;">10106</span>
<span class="t" style="font-size:10.76px;line-height:10.76px;color:#3c3c3c;letter-spacing:-0.250px;left:856.06px;top:629.50px;-webkit-text-stroke:0.2px;">A10005</span>
<span class="t" style="font-size:10.76px;line-height:10.76px;color:#3c3c3c;font-style:italic;right:354.59px;top:629.50px;-webkit-text-stroke:0.15px;">2</span>
</div>
<div style="left:0;top:0;width:1509px;height:653.56px;overflow:hidden;">
<span class="t" style="font-size:12.23px;line-height:12.23px;color:#555;letter-spacing:-0.300px;left:228.34px;transform:translateX(-50%);top:209.16px;-webkit-text-stroke:0.1px;">1</span>
<span class="t" style="font-size:12.23px;line-height:12.23px;color:#555;letter-spacing:-0.300px;left:228.34px;transform:translateX(-50%);top:229.19px;-webkit-text-stroke:0.1px;">2</span>
<span class="t" style="font-size:12.23px;line-height:12.23px;color:#555;letter-spacing:-0.300px;left:228.34px;transform:translateX(-50%);top:249.21px;-webkit-text-stroke:0.1px;">3</span>
<span class="t" style="font-size:12.23px;line-height:12.23px;color:#555;letter-spacing:-0.300px;left:228.34px;transform:translateX(-50%);top:269.24px;-webkit-text-stroke:0.1px;">4</span>
<span class="t" style="font-size:12.23px;line-height:12.23px;color:#555;letter-spacing:-0.300px;left:228.34px;transform:translateX(-50%);top:289.27px;-webkit-text-stroke:0.1px;">5</span>
<span class="t" style="font-size:12.23px;line-height:12.23px;color:#555;letter-spacing:-0.300px;left:228.34px;transform:translateX(-50%);top:309.29px;-webkit-text-stroke:0.1px;">6</span>
<span class="t" style="font-size:12.23px;line-height:12.23px;color:#555;letter-spacing:-0.300px;left:228.34px;transform:translateX(-50%);top:329.32px;-webkit-text-stroke:0.1px;">7</span>
<span class="t" style="font-size:12.23px;line-height:12.23px;color:#555;letter-spacing:-0.300px;left:228.34px;transform:translateX(-50%);top:349.35px;-webkit-text-stroke:0.1px;">8</span>
<span class="t" style="font-size:12.23px;line-height:12.23px;color:#555;letter-spacing:-0.300px;left:228.34px;transform:translateX(-50%);top:369.37px;-webkit-text-stroke:0.1px;">9</span>
<span class="t" style="font-size:12.23px;line-height:12.23px;color:#555;letter-spacing:-0.300px;left:228.34px;transform:translateX(-50%);top:389.40px;-webkit-text-stroke:0.1px;">10</span>
<span class="t" style="font-size:12.23px;line-height:12.23px;color:#555;letter-spacing:-0.300px;left:228.34px;transform:translateX(-50%);top:409.43px;-webkit-text-stroke:0.1px;">11</span>
<span class="t" style="font-size:12.23px;line-height:12.23px;color:#555;letter-spacing:-0.300px;left:228.34px;transform:translateX(-50%);top:429.45px;-webkit-text-stroke:0.1px;">12</span>
<span class="t" style="font-size:12.23px;line-height:12.23px;color:#555;letter-spacing:-0.300px;left:228.34px;transform:translateX(-50%);top:449.48px;-webkit-text-stroke:0.1px;">13</span>
<span class="t" style="font-size:12.23px;line-height:12.23px;color:#555;letter-spacing:-0.300px;left:228.34px;transform:translateX(-50%);top:469.51px;-webkit-text-stroke:0.1px;">14</span>
<span class="t" style="font-size:12.23px;line-height:12.23px;color:#555;letter-spacing:-0.300px;left:228.34px;transform:translateX(-50%);top:489.53px;-webkit-text-stroke:0.1px;">15</span>
<span class="t" style="font-size:12.23px;line-height:12.23px;color:#555;letter-spacing:-0.300px;left:228.34px;transform:translateX(-50%);top:509.56px;-webkit-text-stroke:0.1px;">16</span>
<span class="t" style="font-size:12.23px;line-height:12.23px;color:#555;letter-spacing:-0.300px;left:228.34px;transform:translateX(-50%);top:529.59px;-webkit-text-stroke:0.1px;">17</span>
<span class="t" style="font-size:12.23px;line-height:12.23px;color:#555;letter-spacing:-0.300px;left:228.34px;transform:translateX(-50%);top:549.61px;-webkit-text-stroke:0.1px;">18</span>
<span class="t" style="font-size:12.23px;line-height:12.23px;color:#555;letter-spacing:-0.300px;left:228.34px;transform:translateX(-50%);top:569.64px;-webkit-text-stroke:0.1px;">19</span>
<span class="t" style="font-size:12.23px;line-height:12.23px;color:#555;letter-spacing:-0.300px;left:228.34px;transform:translateX(-50%);top:589.67px;-webkit-text-stroke:0.1px;">20</span>
<span class="t" style="font-size:12.23px;line-height:12.23px;color:#555;letter-spacing:-0.300px;left:228.34px;transform:translateX(-50%);top:609.69px;-webkit-text-stroke:0.1px;">21</span>
<span class="t" style="font-size:12.23px;line-height:12.23px;color:#555;letter-spacing:-0.300px;left:228.34px;transform:translateX(-50%);top:629.72px;-webkit-text-stroke:0.1px;">22</span>
<span class="t" style="font-size:12.23px;line-height:12.23px;color:#555;letter-spacing:-0.300px;left:228.34px;transform:translateX(-50%);top:649.75px;-webkit-text-stroke:0.1px;">23</span>
</div>
<div style="left:1234.68px;top:204.69px;width:15.55px;height:448.87px;background:#f0f0f0;"></div>
<div style="left:242.85px;top:636.61px;width:991.83px;height:16.95px;background:#f0f0f0;"></div>
<div style="left:1234.68px;top:236.37px;width:15.55px;height:156.79px;background:#cbcbcb;"></div>
<div style="left:274.69px;top:636.61px;width:752.44px;height:16.95px;background:#cbcbcb;"></div>
<svg style="left:0;top:0;pointer-events:none" width="1509" height="675" viewBox="0 0 1024 458"><path d="M839.725 154.6L843.125 151.4L846.525 154.6" fill="none" stroke="#4d4d4d" stroke-width="1.5" /><path d="M839.725 416.4L843.125 419.6L846.525 416.4" fill="none" stroke="#4d4d4d" stroke-width="1.5" /><path d="M178.4 434.25L175.2 437.55L178.4 440.85" fill="none" stroke="#4d4d4d" stroke-width="1.5" /><path d="M822.4 434.25L825.6 437.55L822.4 440.85" fill="none" stroke="#4d4d4d" stroke-width="1.5" /></svg>
<span class="t" style="font-size:19.16px;line-height:19.16px;color:#69a595;letter-spacing:-0.605px;left:1269.02px;top:158.25px;-webkit-text-stroke:0;">Abfrageeinstellungen</span>
<span class="t" style="font-size:10.76px;line-height:10.76px;color:#217346;font-weight:bold;letter-spacing:-0.149px;left:1277.27px;top:198.99px;">EIGENSCHAFTEN</span>
<span class="t" style="font-size:11.64px;line-height:11.64px;color:#444;letter-spacing:-0.527px;left:1277.64px;top:217.21px;-webkit-text-stroke:0.1px;">Name</span>
<div style="left:1276.9px;top:232.83px;width:207.78px;height:19.89px;background:#fff;border:1.4px solid #bebebe;"></div>
<span class="t" style="font-size:10.76px;line-height:10.76px;color:#555;letter-spacing:-0.076px;left:1282.8px;top:237.82px;-webkit-text-stroke:0.1px;">tblFakturen</span>
<span class="t" style="font-size:11.64px;line-height:11.64px;color:#2e6aa3;letter-spacing:-0.298px;left:1277.64px;top:261.93px;-webkit-text-stroke:0.1px;">Alle Eigenschaften</span>
<span class="t" style="font-size:10.76px;line-height:10.76px;color:#217346;font-weight:bold;letter-spacing:-0.036px;left:1277.27px;top:295.52px;">ANGEWENDETE SCHRITTE</span>
<div style="left:1276.9px;top:313.88px;width:207.78px;height:319.04px;background:#fff;border:1.4px solid #bebebe;"></div>
<div style="left:1277.93px;top:352.57px;width:205.72px;height:18.64px;background:#d3f0e0;"></div>
<span class="t" style="font-size:11.64px;line-height:11.64px;color:#444;letter-spacing:-0.276px;left:1297.53px;top:317.93px;-webkit-text-stroke:0.1px;">Quelle</span>
<span class="t" style="font-size:11.64px;line-height:11.64px;color:#444;letter-spacing:-0.070px;left:1297.53px;top:336.87px;-webkit-text-stroke:0.1px;">Navigation</span>
<span class="t" style="font-size:11.64px;line-height:11.64px;color:#444;letter-spacing:-0.255px;left:1297.53px;top:355.88px;-webkit-text-stroke:0.1px;">Geänderter Typ</span>
<svg style="left:0;top:0;pointer-events:none" width="1509" height="675" viewBox="0 0 1024 458"><line x1="999.20" y1="110.80" x2="1005.60" y2="117.20" stroke="#777" stroke-width="0.8" stroke-linecap="butt"/><line x1="1005.60" y1="110.80" x2="999.20" y2="117.20" stroke="#777" stroke-width="0.8" stroke-linecap="butt"/><path d="M862.4 137.1V141H858.2Z" fill="#404040" stroke="none" stroke-width="0.7" /><path d="M862.4 202.2V206H858.2Z" fill="#404040" stroke="none" stroke-width="0.7" /><line x1="871.40" y1="242.60" x2="877.20" y2="248.20" stroke="#505050" stroke-width="1.0" stroke-linecap="butt"/><line x1="877.20" y1="242.60" x2="871.40" y2="248.20" stroke="#505050" stroke-width="1.0" stroke-linecap="butt"/><line x1="999.50" y1="233.00" x2="1001.70" y2="233.00" stroke="#a6a6a6" stroke-width="0.95" stroke-linecap="butt"/><line x1="999.12" y1="233.92" x2="1000.67" y2="235.47" stroke="#a6a6a6" stroke-width="0.95" stroke-linecap="butt"/><line x1="998.20" y1="234.30" x2="998.20" y2="236.50" stroke="#a6a6a6" stroke-width="0.95" stroke-linecap="butt"/><line x1="997.28" y1="233.92" x2="995.73" y2="235.47" stroke="#a6a6a6" stroke-width="0.95" stroke-linecap="butt"/><line x1="996.90" y1="233.00" x2="994.70" y2="233.00" stroke="#a6a6a6" stroke-width="0.95" stroke-linecap="butt"/><line x1="997.28" y1="232.08" x2="995.73" y2="230.53" stroke="#a6a6a6" stroke-width="0.95" stroke-linecap="butt"/><line x1="998.20" y1="231.70" x2="998.20" y2="229.50" stroke="#a6a6a6" stroke-width="0.95" stroke-linecap="butt"/><line x1="999.12" y1="232.08" x2="1000.67" y2="230.53" stroke="#a6a6a6" stroke-width="0.95" stroke-linecap="butt"/><circle cx="998.2" cy="233" r="1.7" fill="#fff" stroke="#a6a6a6" stroke-width="0.8"/></svg>
<div style="left:0.0px;top:653.11px;width:1509.0px;height:21.81px;background:#f3f2f1;border-top:1px solid #c6c6c6;"></div>
<span class="t" style="font-size:9.80px;line-height:9.80px;color:#606060;letter-spacing:-0.117px;left:5.89px;top:659.60px;-webkit-text-stroke:0.1px;">8 SPALTEN, 999+ ZEILEN</span>
<span class="t" style="font-size:9.80px;line-height:9.80px;color:#606060;letter-spacing:0.303px;left:134.84px;top:659.60px;-webkit-text-stroke:0.1px;">Spaltenprofilerstellung basierend auf obersten 1000 Zeilen</span>
<span class="t" style="font-size:9.80px;line-height:9.80px;color:#606060;letter-spacing:-0.182px;left:1303.06px;top:659.60px;-webkit-text-stroke:0.1px;">VORSCHAU HERUNTERGELADEN UM 12:10</span>
<div style="left:0;top:0;width:1509px;height:675px;border:1.5px solid #0f7dd6;border-top:none;border-radius:8px;"></div>
</div></body></html>
